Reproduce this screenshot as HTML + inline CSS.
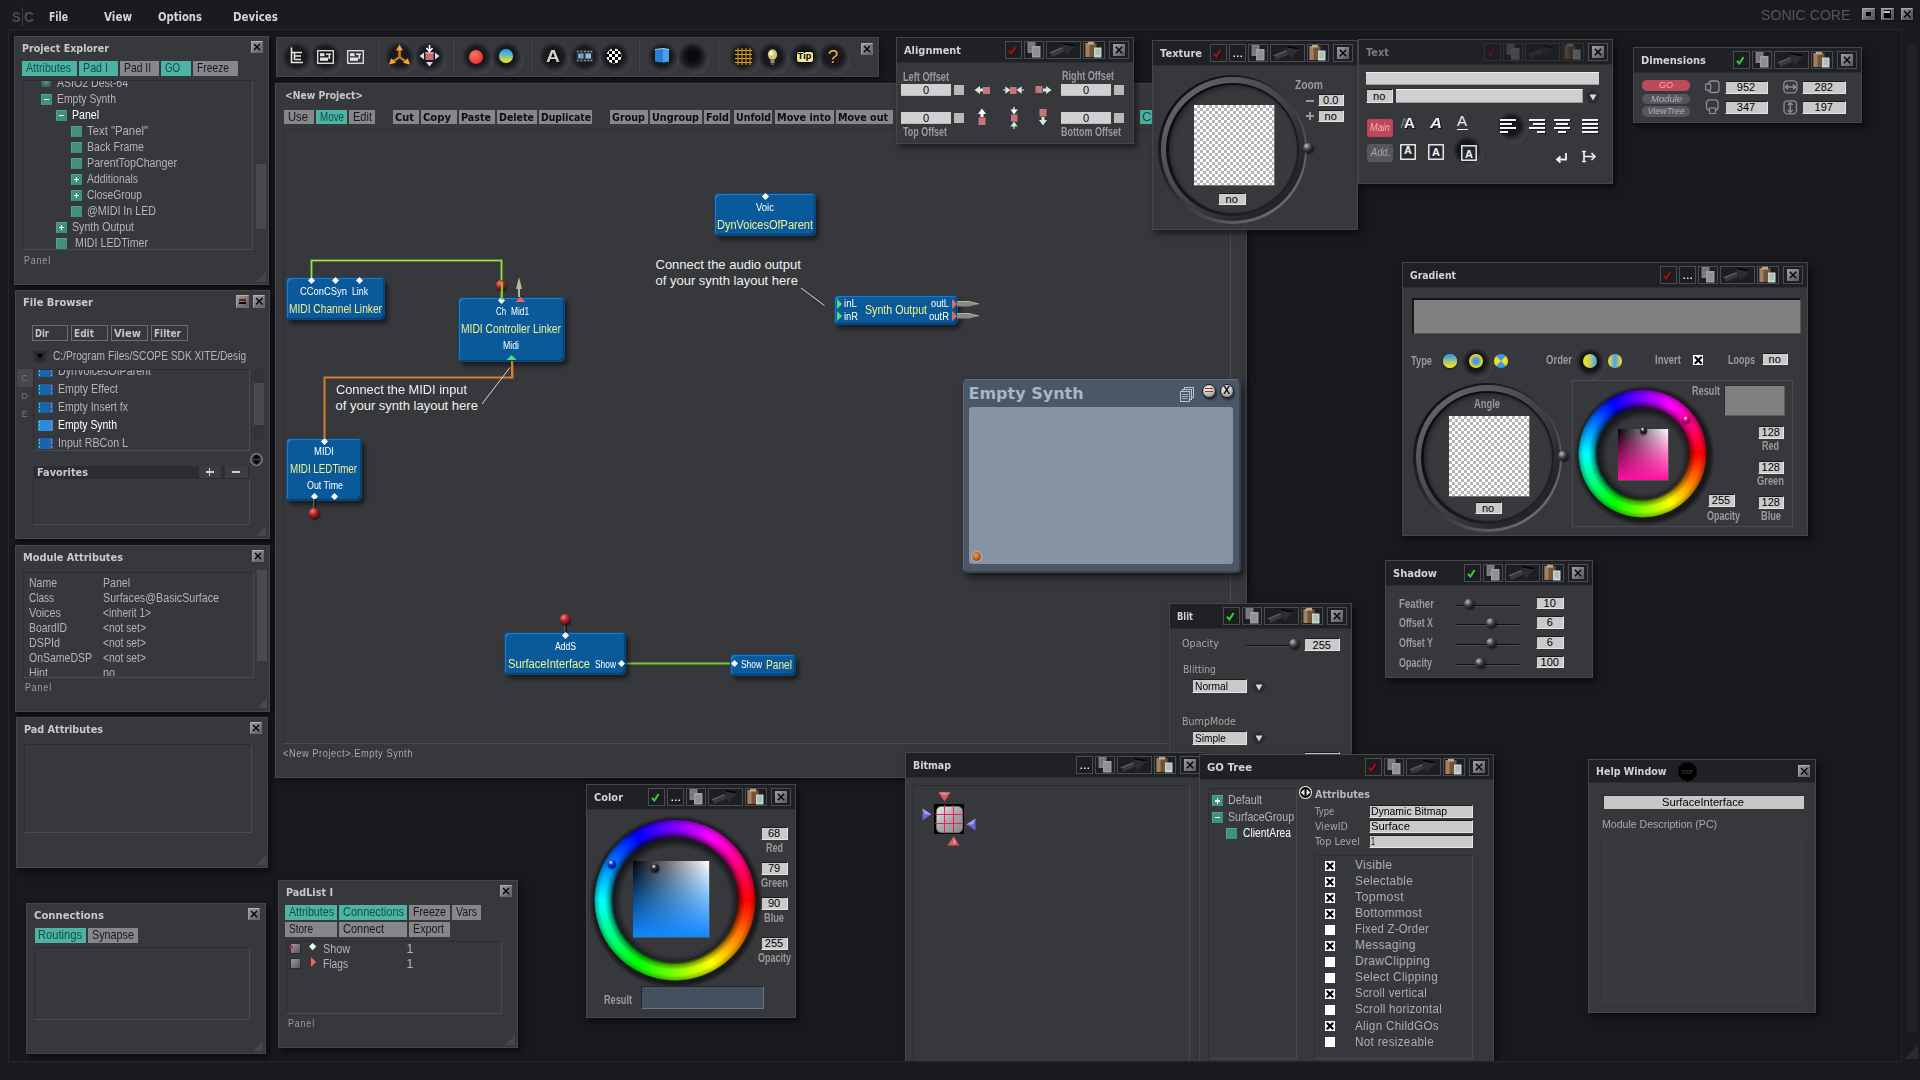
<!DOCTYPE html>
<html><head><meta charset="utf-8"><title>SCOPE SDK</title><style>
html,body{margin:0;padding:0}
body{width:1920px;height:1080px;overflow:hidden;background:#1a1b20;position:relative;font-family:"Liberation Sans",sans-serif}
div,span.t{position:absolute;box-sizing:border-box}
span.t{white-space:pre;transform-origin:0 50%}
.pn{background:#36383c;border:1px solid #44464a;box-shadow:3px 4px 6px rgba(0,0,0,.5)}
.hd{background:#202125;border-bottom:1px solid #2b2d31}
.in{border:1px solid #494b4f;border-top-color:#2b2d31;border-left-color:#2b2d31;background:#36383c}
.vb{background:#cacaca;border-top:1px solid #1c1c1c;border-left:1px solid #3a3a3a;border-right:1px solid #e4e4e4;border-bottom:1px solid #e4e4e4}
.hb{border:1px solid #4a4c50;background:#1d1e22}
.tab{background:#85878b}
.tab.on{background:#4fb3a4}
</style></head><body>
<div style="left:8px;top:29px;width:1894px;height:1033px;background:#17191d;border:1px solid #25272b;"></div>
<div style="left:1907px;top:44px;width:10px;height:987px;background:#202226;"></div>
<svg style="position:absolute;left:1905px;top:1045px;" width="13" height="14" viewBox="0 0 13 14"><path d="M13 0L13 14L0 14Z" fill="#2a2c30"/></svg>
<span class="t" style="left:12.2px;top:6.5px;font:bold 15px/19px 'Liberation Sans',sans-serif;color:#4c4e52;transform:scaleX(0.860);">S</span>
<div style="left:22.3px;top:7px;width:1px;height:19px;background:#3a3c40;"></div>
<span class="t" style="left:23.8px;top:6.5px;font:bold 15px/19px 'Liberation Sans',sans-serif;color:#4c4e52;transform:scaleX(0.924);">C</span>
<span class="t" style="left:49.0px;top:8.5px;font:bold 12px/16px 'DejaVu Sans','Liberation Sans',sans-serif;color:#d6d6d6;transform:scaleX(0.774);">File</span>
<span class="t" style="left:103.5px;top:8.5px;font:bold 12px/16px 'DejaVu Sans','Liberation Sans',sans-serif;color:#d6d6d6;transform:scaleX(0.864);">View</span>
<span class="t" style="left:157.5px;top:8.5px;font:bold 12px/16px 'DejaVu Sans','Liberation Sans',sans-serif;color:#d6d6d6;transform:scaleX(0.837);">Options</span>
<span class="t" style="left:232.5px;top:8.5px;font:bold 12px/16px 'DejaVu Sans','Liberation Sans',sans-serif;color:#d6d6d6;transform:scaleX(0.858);">Devices</span>
<span class="t" style="left:1761.0px;top:4.7px;font:15px/19px 'Liberation Sans',sans-serif;color:#53555a;transform:scaleX(0.942);">SONIC CORE</span>
<div style="left:1862px;top:7.5px;width:12.5px;height:12.5px;background:linear-gradient(135deg,#909295,#4c4e52);border:1px solid #5c5e62;border-top-color:#a8aaad;border-left-color:#98999c;box-shadow:1px 1px 2px rgba(0,0,0,.5);"></div>
<div style="left:1866px;top:11.5px;width:4.5px;height:4.5px;background:#000;"></div>
<div style="left:1881px;top:7.5px;width:12.5px;height:12.5px;background:linear-gradient(135deg,#909295,#4c4e52);border:1px solid #5c5e62;border-top-color:#a8aaad;border-left-color:#98999c;box-shadow:1px 1px 2px rgba(0,0,0,.5);"></div>
<div style="left:1883.5px;top:10px;width:7.5px;height:7.5px;background:#000;"></div>
<div style="left:1884.3px;top:10.6px;width:6px;height:2.4px;background:#c4c4c4;"></div>
<div style="left:1900.5px;top:7.5px;width:12.5px;height:12.5px;background:linear-gradient(135deg,#909295,#4c4e52);border:1px solid #5c5e62;border-top-color:#a8aaad;border-left-color:#98999c;box-shadow:1px 1px 2px rgba(0,0,0,.5);"></div>
<svg style="position:absolute;left:1900.5px;top:7.5px;" width="12.5" height="12.5" viewBox="0 0 12.5 12.5"><path d="M3 3L9.5 9.5M9.5 3L3 9.5" stroke="#000" stroke-width="1.3"/></svg>
<div class="pn" style="left:14px;top:36px;width:255px;height:249px;"></div>
<span class="t" style="left:21.5px;top:40.5px;font:bold 11px/15px 'DejaVu Sans','Liberation Sans',sans-serif;color:#c9c9c9;transform:scaleX(0.870);">Project Explorer</span>
<div style="left:250.5px;top:41px;width:12px;height:12px;background:linear-gradient(135deg,#9a9c9f,#5c5e62);border:1px solid #6a6c70;border-top-color:#b0b2b5;border-left-color:#a0a2a5;"></div>
<svg style="position:absolute;left:250.5px;top:41px;" width="12" height="12" viewBox="0 0 12 12"><path d="M3 3L9 9M9 3L3 9" stroke="#000" stroke-width="1.4" fill="none"/></svg>
<div class="tab on" style="left:22px;top:61px;width:55px;height:15px;"></div>
<span class="t" style="left:25.7px;top:59.4px;font:13px/17px 'Liberation Sans',sans-serif;color:#0b5247;transform:scaleX(0.819);">Attributes</span>
<div class="tab on" style="left:79px;top:61px;width:39px;height:15px;"></div>
<span class="t" style="left:82.7px;top:59.4px;font:13px/17px 'Liberation Sans',sans-serif;color:#0b5247;transform:scaleX(0.823);">Pad I</span>
<div class="tab" style="left:120px;top:61px;width:39px;height:15px;"></div>
<span class="t" style="left:123.7px;top:59.4px;font:13px/17px 'Liberation Sans',sans-serif;color:#17181a;transform:scaleX(0.795);">Pad II</span>
<div class="tab on" style="left:161px;top:61px;width:30px;height:15px;"></div>
<span class="t" style="left:164.7px;top:59.4px;font:13px/17px 'Liberation Sans',sans-serif;color:#0b5247;transform:scaleX(0.742);">GO</span>
<div class="tab" style="left:193px;top:61px;width:45px;height:15px;"></div>
<span class="t" style="left:196.7px;top:59.4px;font:13px/17px 'Liberation Sans',sans-serif;color:#17181a;transform:scaleX(0.791);">Freeze</span>
<div class="in" style="left:22px;top:80px;width:231px;height:170px;overflow:hidden;"></div>
<div style="left:256px;top:164px;width:9.5px;height:65px;background:#484a4e;"></div>
<div style="left:22px;top:81px;width:230px;height:168px;overflow:hidden">
<div style="left:19px;top:-4px;width:10px;height:10px;background:radial-gradient(circle,#5a9a8a,#2c4a44);"></div>
<span class="t" style="left:35.0px;top:-6.1px;font:12px/16px 'Liberation Sans',sans-serif;color:#b4b4b4;transform:scaleX(0.880);">ASIO2 Dest-64</span>
<div style="left:19px;top:12.5px;width:11px;height:11px;background:#3f917f;border-top:1px solid #4fa592;border-left:1px solid #4fa592;"></div>
<div style="left:22px;top:17.5px;width:5px;height:1.5px;background:#fff;"></div>
<span class="t" style="left:35.0px;top:9.9px;font:12px/16px 'Liberation Sans',sans-serif;color:#b4b4b4;transform:scaleX(0.868);">Empty Synth</span>
<div style="left:34px;top:28.5px;width:11px;height:11px;background:#3f917f;border-top:1px solid #4fa592;border-left:1px solid #4fa592;"></div>
<div style="left:37px;top:33.5px;width:5px;height:1.5px;background:#fff;"></div>
<span class="t" style="left:50.0px;top:25.9px;font:12px/16px 'Liberation Sans',sans-serif;color:#ffffff;transform:scaleX(0.880);">Panel</span>
<div style="left:49px;top:44.5px;width:11px;height:11px;background:#3f917f;border-top:1px solid #4fa592;border-left:1px solid #4fa592;"></div>
<span class="t" style="left:65.0px;top:41.9px;font:12px/16px 'Liberation Sans',sans-serif;color:#b4b4b4;transform:scaleX(0.945);">Text "Panel"</span>
<div style="left:49px;top:60.5px;width:11px;height:11px;background:#3f917f;border-top:1px solid #4fa592;border-left:1px solid #4fa592;"></div>
<span class="t" style="left:65.0px;top:57.9px;font:12px/16px 'Liberation Sans',sans-serif;color:#b4b4b4;transform:scaleX(0.881);">Back Frame</span>
<div style="left:49px;top:76.5px;width:11px;height:11px;background:#3f917f;border-top:1px solid #4fa592;border-left:1px solid #4fa592;"></div>
<span class="t" style="left:65.0px;top:73.9px;font:12px/16px 'Liberation Sans',sans-serif;color:#b4b4b4;transform:scaleX(0.894);">ParentTopChanger</span>
<div style="left:49px;top:92.5px;width:11px;height:11px;background:#3f917f;border-top:1px solid #4fa592;border-left:1px solid #4fa592;"></div>
<div style="left:52px;top:97.5px;width:5px;height:1.5px;background:#fff;"></div>
<div style="left:53.8px;top:95.5px;width:1.5px;height:5.5px;background:#fff;"></div>
<span class="t" style="left:65.0px;top:89.9px;font:12px/16px 'Liberation Sans',sans-serif;color:#b4b4b4;transform:scaleX(0.869);">Additionals</span>
<div style="left:49px;top:108.5px;width:11px;height:11px;background:#3f917f;border-top:1px solid #4fa592;border-left:1px solid #4fa592;"></div>
<div style="left:52px;top:113.5px;width:5px;height:1.5px;background:#fff;"></div>
<div style="left:53.8px;top:111.5px;width:1.5px;height:5.5px;background:#fff;"></div>
<span class="t" style="left:65.0px;top:105.9px;font:12px/16px 'Liberation Sans',sans-serif;color:#b4b4b4;transform:scaleX(0.859);">CloseGroup</span>
<div style="left:49px;top:124.5px;width:11px;height:11px;background:#3f917f;border-top:1px solid #4fa592;border-left:1px solid #4fa592;"></div>
<span class="t" style="left:65.0px;top:121.9px;font:12px/16px 'Liberation Sans',sans-serif;color:#b4b4b4;transform:scaleX(0.890);">@MIDI In LED</span>
<div style="left:34px;top:140.5px;width:11px;height:11px;background:#3f917f;border-top:1px solid #4fa592;border-left:1px solid #4fa592;"></div>
<div style="left:37px;top:145.5px;width:5px;height:1.5px;background:#fff;"></div>
<div style="left:38.8px;top:143.5px;width:1.5px;height:5.5px;background:#fff;"></div>
<span class="t" style="left:50.0px;top:137.9px;font:12px/16px 'Liberation Sans',sans-serif;color:#b4b4b4;transform:scaleX(0.886);">Synth Output</span>
<div style="left:34px;top:156.5px;width:11px;height:11px;background:#3f917f;border-top:1px solid #4fa592;border-left:1px solid #4fa592;"></div>
<span class="t" style="left:53.0px;top:153.9px;font:12px/16px 'Liberation Sans',sans-serif;color:#b4b4b4;transform:scaleX(0.888);">MIDI LEDTimer</span>
</div>
<span class="t" style="left:23.5px;top:254.0px;font:10px/14px 'Liberation Sans',sans-serif;color:#9c9c9c;letter-spacing:1px;transform:scaleX(0.883);">Panel</span>
<svg style="position:absolute;left:256px;top:272px;" width="10" height="10" viewBox="0 0 10 10"><path d="M10 0L10 10L0 10Z" fill="#45474b"/></svg>
<div class="pn" style="left:15px;top:290px;width:255px;height:249px;"></div>
<span class="t" style="left:22.5px;top:294.5px;font:bold 11px/15px 'DejaVu Sans','Liberation Sans',sans-serif;color:#c9c9c9;transform:scaleX(0.906);">File Browser</span>
<div style="left:236px;top:295px;width:12.5px;height:12.5px;background:linear-gradient(135deg,#9a9c9f,#5c5e62);border:1px solid #6a6c70;border-top-color:#b0b2b5;border-left-color:#a0a2a5;"></div>
<div style="left:239px;top:299px;width:6.5px;height:1.5px;background:#8a1010;"></div>
<div style="left:239px;top:302px;width:6.5px;height:1.5px;background:#000;"></div>
<div style="left:252.5px;top:295px;width:12.5px;height:12.5px;background:linear-gradient(135deg,#9a9c9f,#5c5e62);border:1px solid #6a6c70;border-top-color:#b0b2b5;border-left-color:#a0a2a5;"></div>
<svg style="position:absolute;left:252.5px;top:295px;" width="12.5" height="12.5" viewBox="0 0 12.5 12.5"><path d="M3 3L9.5 9.5M9.5 3L3 9.5" stroke="#000" stroke-width="1.4" fill="none"/></svg>
<div style="left:31.5px;top:324.5px;width:36.5px;height:16.5px;border:1px solid #6c6e72;"></div>
<span class="t" style="left:34.5px;top:325.5px;font:bold 11px/15px 'DejaVu Sans','Liberation Sans',sans-serif;color:#c4c4c4;transform:scaleX(0.765);">Dir</span>
<div style="left:71px;top:324.5px;width:36.5px;height:16.5px;border:1px solid #6c6e72;"></div>
<span class="t" style="left:74.0px;top:325.5px;font:bold 11px/15px 'DejaVu Sans','Liberation Sans',sans-serif;color:#c4c4c4;transform:scaleX(0.819);">Edit</span>
<div style="left:111px;top:324.5px;width:36.5px;height:16.5px;border:1px solid #6c6e72;"></div>
<span class="t" style="left:114.0px;top:325.5px;font:bold 11px/15px 'DejaVu Sans','Liberation Sans',sans-serif;color:#c4c4c4;transform:scaleX(0.909);">View</span>
<div style="left:151px;top:324.5px;width:36.5px;height:16.5px;border:1px solid #6c6e72;"></div>
<span class="t" style="left:154.0px;top:325.5px;font:bold 11px/15px 'DejaVu Sans','Liberation Sans',sans-serif;color:#c4c4c4;transform:scaleX(0.814);">Filter</span>
<div style="left:34px;top:351px;width:12px;height:10.5px;background:#2a2c30;"></div>
<svg style="position:absolute;left:34px;top:351px;" width="12" height="11" viewBox="0 0 12 11"><path d="M2.5 3L9.5 3L6 8Z" fill="#000"/></svg>
<span class="t" style="left:53.0px;top:347.9px;font:12px/16px 'Liberation Sans',sans-serif;color:#b4b4b4;transform:scaleX(0.849);">C:/Program Files/SCOPE SDK XITE/Desig</span>
<div style="left:17px;top:369px;width:16px;height:17.5px;background:#45474b;"></div>
<span class="t" style="left:21.2px;top:371.5px;font:9px/13px 'Liberation Sans',sans-serif;color:#74767a;">C</span>
<span class="t" style="left:21.2px;top:389.5px;font:9px/13px 'Liberation Sans',sans-serif;color:#74767a;">D</span>
<span class="t" style="left:21.5px;top:408.0px;font:9px/13px 'Liberation Sans',sans-serif;color:#74767a;">E</span>
<div class="in" style="left:33px;top:369px;width:216.5px;height:81.5px;"></div>
<div style="left:34px;top:370px;width:214px;height:79px;overflow:hidden">
<div style="left:4px;top:-4.5px;width:15px;height:11px;background:#1665ae;border-radius:1px;"></div>
<div style="left:4.5px;top:-3.5px;width:1.8px;height:2.2px;background:#40d888;"></div>
<div style="left:4.5px;top:0px;width:1.8px;height:2.2px;background:#40d888;"></div>
<div style="left:4.5px;top:3.5px;width:1.8px;height:2.2px;background:#40d888;"></div>
<div style="left:16.7px;top:-3.5px;width:1.8px;height:2.2px;background:#f07050;"></div>
<div style="left:16.7px;top:0px;width:1.8px;height:2.2px;background:#f07050;"></div>
<div style="left:16.7px;top:3.5px;width:1.8px;height:2.2px;background:#f07050;"></div>
<span class="t" style="left:24.0px;top:-7.1px;font:12px/16px 'Liberation Sans',sans-serif;color:#b4b4b4;transform:scaleX(0.888);">DynVoicesOfParent</span>
<div style="left:4px;top:13.5px;width:15px;height:11px;background:#1665ae;border-radius:1px;"></div>
<div style="left:4.5px;top:14.5px;width:1.8px;height:2.2px;background:#40d888;"></div>
<div style="left:4.5px;top:18px;width:1.8px;height:2.2px;background:#40d888;"></div>
<div style="left:4.5px;top:21.5px;width:1.8px;height:2.2px;background:#40d888;"></div>
<div style="left:16.7px;top:14.5px;width:1.8px;height:2.2px;background:#f07050;"></div>
<div style="left:16.7px;top:18px;width:1.8px;height:2.2px;background:#f07050;"></div>
<div style="left:16.7px;top:21.5px;width:1.8px;height:2.2px;background:#f07050;"></div>
<span class="t" style="left:24.0px;top:10.9px;font:12px/16px 'Liberation Sans',sans-serif;color:#b4b4b4;transform:scaleX(0.885);">Empty Effect</span>
<div style="left:4px;top:31.5px;width:15px;height:11px;background:#1665ae;border-radius:1px;"></div>
<div style="left:4.5px;top:32.5px;width:1.8px;height:2.2px;background:#40d888;"></div>
<div style="left:4.5px;top:36px;width:1.8px;height:2.2px;background:#40d888;"></div>
<div style="left:4.5px;top:39.5px;width:1.8px;height:2.2px;background:#40d888;"></div>
<div style="left:16.7px;top:32.5px;width:1.8px;height:2.2px;background:#f07050;"></div>
<div style="left:16.7px;top:36px;width:1.8px;height:2.2px;background:#f07050;"></div>
<div style="left:16.7px;top:39.5px;width:1.8px;height:2.2px;background:#f07050;"></div>
<span class="t" style="left:24.0px;top:28.9px;font:12px/16px 'Liberation Sans',sans-serif;color:#b4b4b4;transform:scaleX(0.875);">Empty Insert fx</span>
<div style="left:4px;top:49.5px;width:15px;height:11px;background:#2a8ae0;border-radius:1px;"></div>
<div style="left:4.5px;top:50.5px;width:1.8px;height:2.2px;background:#40d888;"></div>
<div style="left:4.5px;top:54px;width:1.8px;height:2.2px;background:#40d888;"></div>
<div style="left:4.5px;top:57.5px;width:1.8px;height:2.2px;background:#40d888;"></div>
<div style="left:16.7px;top:50.5px;width:1.8px;height:2.2px;background:#f07050;"></div>
<div style="left:16.7px;top:54px;width:1.8px;height:2.2px;background:#f07050;"></div>
<div style="left:16.7px;top:57.5px;width:1.8px;height:2.2px;background:#f07050;"></div>
<span class="t" style="left:24.0px;top:46.9px;font:12px/16px 'Liberation Sans',sans-serif;color:#ffffff;transform:scaleX(0.868);">Empty Synth</span>
<div style="left:4px;top:67.5px;width:15px;height:11px;background:#1665ae;border-radius:1px;"></div>
<div style="left:4.5px;top:68.5px;width:1.8px;height:2.2px;background:#40d888;"></div>
<div style="left:4.5px;top:72px;width:1.8px;height:2.2px;background:#40d888;"></div>
<div style="left:4.5px;top:75.5px;width:1.8px;height:2.2px;background:#40d888;"></div>
<div style="left:16.7px;top:68.5px;width:1.8px;height:2.2px;background:#f07050;"></div>
<div style="left:16.7px;top:72px;width:1.8px;height:2.2px;background:#f07050;"></div>
<div style="left:16.7px;top:75.5px;width:1.8px;height:2.2px;background:#f07050;"></div>
<span class="t" style="left:24.0px;top:64.9px;font:12px/16px 'Liberation Sans',sans-serif;color:#b4b4b4;transform:scaleX(0.890);">Input RBCon L</span>
</div>
<div style="left:254px;top:369px;width:10px;height:71px;background:#313337;"></div>
<div style="left:254px;top:382.5px;width:10px;height:42.5px;background:#484a4e;"></div>
<svg style="position:absolute;left:249.5px;top:452.5px;" width="13" height="13" viewBox="0 0 13 13"><circle cx="6.5" cy="6.5" r="5.8" fill="#36383c" stroke="#85878b" stroke-width="1.2"/><path d="M3 5.6L6.5 1.2L10 5.6ZM3 7.4L6.5 11.8L10 7.4Z" fill="#000"/></svg>
<div style="left:33px;top:465.5px;width:216px;height:12.5px;background:#2b2d31;"></div>
<span class="t" style="left:36.5px;top:464.5px;font:bold 11px/15px 'DejaVu Sans','Liberation Sans',sans-serif;color:#c9c9c9;transform:scaleX(0.887);">Favorites</span>
<div style="left:199px;top:466px;width:22px;height:12px;background:#3b3d41;"></div>
<div style="left:225px;top:466px;width:22.5px;height:12px;background:#3b3d41;"></div>
<div style="left:205.5px;top:471.3px;width:8px;height:1.6px;background:#d0d0d0;"></div>
<div style="left:208.7px;top:468px;width:1.6px;height:8px;background:#d0d0d0;"></div>
<div style="left:232px;top:471.3px;width:8px;height:1.6px;background:#d0d0d0;"></div>
<div class="in" style="left:33px;top:478px;width:216.5px;height:46.5px;"></div>
<svg style="position:absolute;left:256px;top:526px;" width="10" height="10" viewBox="0 0 10 10"><path d="M10 0L10 10L0 10Z" fill="#45474b"/></svg>
<div class="pn" style="left:15px;top:545px;width:255px;height:167px;"></div>
<span class="t" style="left:22.5px;top:549.5px;font:bold 11px/15px 'DejaVu Sans','Liberation Sans',sans-serif;color:#c9c9c9;transform:scaleX(0.889);">Module Attributes</span>
<div style="left:251.5px;top:550px;width:12px;height:12px;background:linear-gradient(135deg,#9a9c9f,#5c5e62);border:1px solid #6a6c70;border-top-color:#b0b2b5;border-left-color:#a0a2a5;"></div>
<svg style="position:absolute;left:251.5px;top:550px;" width="12" height="12" viewBox="0 0 12 12"><path d="M3 3L9 9M9 3L3 9" stroke="#000" stroke-width="1.4" fill="none"/></svg>
<div class="in" style="left:23px;top:572px;width:230.5px;height:105.5px;"></div>
<div style="left:24px;top:573px;width:228px;height:103px;overflow:hidden">
<span class="t" style="left:5.0px;top:1.9px;font:12px/16px 'Liberation Sans',sans-serif;color:#b4b4b4;transform:scaleX(0.875);">Name</span>
<span class="t" style="left:79.0px;top:1.9px;font:12px/16px 'Liberation Sans',sans-serif;color:#b4b4b4;transform:scaleX(0.880);">Panel</span>
<span class="t" style="left:5.0px;top:16.9px;font:12px/16px 'Liberation Sans',sans-serif;color:#b4b4b4;transform:scaleX(0.833);">Class</span>
<span class="t" style="left:79.0px;top:16.9px;font:12px/16px 'Liberation Sans',sans-serif;color:#b4b4b4;transform:scaleX(0.891);">Surfaces@BasicSurface</span>
<span class="t" style="left:5.0px;top:31.9px;font:12px/16px 'Liberation Sans',sans-serif;color:#b4b4b4;transform:scaleX(0.905);">Voices</span>
<span class="t" style="left:79.0px;top:31.9px;font:12px/16px 'Liberation Sans',sans-serif;color:#b4b4b4;transform:scaleX(0.846);">&lt;inherit 1&gt;</span>
<span class="t" style="left:5.0px;top:46.9px;font:12px/16px 'Liberation Sans',sans-serif;color:#b4b4b4;transform:scaleX(0.863);">BoardID</span>
<span class="t" style="left:79.0px;top:46.9px;font:12px/16px 'Liberation Sans',sans-serif;color:#b4b4b4;transform:scaleX(0.859);">&lt;not set&gt;</span>
<span class="t" style="left:5.0px;top:61.9px;font:12px/16px 'Liberation Sans',sans-serif;color:#b4b4b4;transform:scaleX(0.894);">DSPId</span>
<span class="t" style="left:79.0px;top:61.9px;font:12px/16px 'Liberation Sans',sans-serif;color:#b4b4b4;transform:scaleX(0.859);">&lt;not set&gt;</span>
<span class="t" style="left:5.0px;top:76.9px;font:12px/16px 'Liberation Sans',sans-serif;color:#b4b4b4;transform:scaleX(0.875);">OnSameDSP</span>
<span class="t" style="left:79.0px;top:76.9px;font:12px/16px 'Liberation Sans',sans-serif;color:#b4b4b4;transform:scaleX(0.859);">&lt;not set&gt;</span>
<span class="t" style="left:5.0px;top:91.9px;font:12px/16px 'Liberation Sans',sans-serif;color:#b4b4b4;transform:scaleX(0.890);">Hint</span>
<span class="t" style="left:79.0px;top:91.9px;font:12px/16px 'Liberation Sans',sans-serif;color:#b4b4b4;transform:scaleX(0.899);">no</span>
</div>
<div style="left:257px;top:570px;width:9.5px;height:91px;background:#484a4e;"></div>
<span class="t" style="left:24.5px;top:680.5px;font:10px/14px 'Liberation Sans',sans-serif;color:#9c9c9c;letter-spacing:1px;transform:scaleX(0.883);">Panel</span>
<svg style="position:absolute;left:257px;top:698px;" width="10" height="10" viewBox="0 0 10 10"><path d="M10 0L10 10L0 10Z" fill="#45474b"/></svg>
<div class="pn" style="left:16px;top:717px;width:252px;height:151px;"></div>
<span class="t" style="left:23.5px;top:721.5px;font:bold 11px/15px 'DejaVu Sans','Liberation Sans',sans-serif;color:#c9c9c9;transform:scaleX(0.877);">Pad Attributes</span>
<div style="left:249.5px;top:722px;width:12px;height:12px;background:linear-gradient(135deg,#9a9c9f,#5c5e62);border:1px solid #6a6c70;border-top-color:#b0b2b5;border-left-color:#a0a2a5;"></div>
<svg style="position:absolute;left:249.5px;top:722px;" width="12" height="12" viewBox="0 0 12 12"><path d="M3 3L9 9M9 3L3 9" stroke="#000" stroke-width="1.4" fill="none"/></svg>
<div class="in" style="left:24px;top:744px;width:227.5px;height:89px;"></div>
<svg style="position:absolute;left:256px;top:855px;" width="10" height="10" viewBox="0 0 10 10"><path d="M10 0L10 10L0 10Z" fill="#45474b"/></svg>
<div class="pn" style="left:26px;top:903px;width:240px;height:151px;"></div>
<span class="t" style="left:33.5px;top:907.5px;font:bold 11px/15px 'DejaVu Sans','Liberation Sans',sans-serif;color:#c9c9c9;transform:scaleX(0.918);">Connections</span>
<div style="left:247.5px;top:908px;width:12px;height:12px;background:linear-gradient(135deg,#9a9c9f,#5c5e62);border:1px solid #6a6c70;border-top-color:#b0b2b5;border-left-color:#a0a2a5;"></div>
<svg style="position:absolute;left:247.5px;top:908px;" width="12" height="12" viewBox="0 0 12 12"><path d="M3 3L9 9M9 3L3 9" stroke="#000" stroke-width="1.4" fill="none"/></svg>
<div class="tab on" style="left:34.5px;top:928px;width:51.5px;height:15px;"></div>
<span class="t" style="left:38.2px;top:926.4px;font:13px/17px 'Liberation Sans',sans-serif;color:#0b5247;transform:scaleX(0.857);">Routings</span>
<div class="tab" style="left:88px;top:928px;width:49.5px;height:15px;"></div>
<span class="t" style="left:91.7px;top:926.4px;font:13px/17px 'Liberation Sans',sans-serif;color:#17181a;transform:scaleX(0.830);">Synapse</span>
<div class="in" style="left:34px;top:947px;width:215.5px;height:72.5px;"></div>
<svg style="position:absolute;left:253px;top:1041px;" width="10" height="10" viewBox="0 0 10 10"><path d="M10 0L10 10L0 10Z" fill="#45474b"/></svg>
<div style="left:276px;top:37px;width:603px;height:40px;background:#36383c;border:1px solid #44464a;box-shadow:2px 3px 5px rgba(0,0,0,.45);"></div>
<div style="left:377px;top:41px;width:1px;height:32px;background:#303236;"></div>
<div style="left:378px;top:41px;width:1px;height:32px;background:#45474b;"></div>
<div style="left:452px;top:41px;width:1px;height:32px;background:#303236;"></div>
<div style="left:453px;top:41px;width:1px;height:32px;background:#45474b;"></div>
<div style="left:529.5px;top:41px;width:1px;height:32px;background:#303236;"></div>
<div style="left:530.5px;top:41px;width:1px;height:32px;background:#45474b;"></div>
<div style="left:637.5px;top:41px;width:1px;height:32px;background:#303236;"></div>
<div style="left:638.5px;top:41px;width:1px;height:32px;background:#45474b;"></div>
<div style="left:716.5px;top:41px;width:1px;height:32px;background:#303236;"></div>
<div style="left:717.5px;top:41px;width:1px;height:32px;background:#45474b;"></div>
<div style="left:281.5px;top:41.5px;width:29px;height:29px;background:radial-gradient(circle,rgba(14,15,18,0.75) 0%,rgba(14,15,18,0.75) 45%,rgba(20,21,24,0) 72%);border-radius:50%;"></div>
<div style="left:284.5px;top:45.5px;width:29px;height:29px;background:radial-gradient(circle,rgba(80,82,86,0) 55%,rgba(80,82,86,.35) 64%,rgba(80,82,86,0) 74%);border-radius:50%;clip-path:polygon(100% 30%,100% 100%,30% 100%);"></div>
<div style="left:310.5px;top:41.5px;width:29px;height:29px;background:radial-gradient(circle,rgba(14,15,18,0.75) 0%,rgba(14,15,18,0.75) 45%,rgba(20,21,24,0) 72%);border-radius:50%;"></div>
<div style="left:313.5px;top:45.5px;width:29px;height:29px;background:radial-gradient(circle,rgba(80,82,86,0) 55%,rgba(80,82,86,.35) 64%,rgba(80,82,86,0) 74%);border-radius:50%;clip-path:polygon(100% 30%,100% 100%,30% 100%);"></div>
<div style="left:384.5px;top:41.5px;width:29px;height:29px;background:radial-gradient(circle,rgba(14,15,18,0.75) 0%,rgba(14,15,18,0.75) 45%,rgba(20,21,24,0) 72%);border-radius:50%;"></div>
<div style="left:387.5px;top:45.5px;width:29px;height:29px;background:radial-gradient(circle,rgba(80,82,86,0) 55%,rgba(80,82,86,.35) 64%,rgba(80,82,86,0) 74%);border-radius:50%;clip-path:polygon(100% 30%,100% 100%,30% 100%);"></div>
<div style="left:414.5px;top:41.5px;width:29px;height:29px;background:radial-gradient(circle,rgba(14,15,18,0.75) 0%,rgba(14,15,18,0.75) 45%,rgba(20,21,24,0) 72%);border-radius:50%;"></div>
<div style="left:417.5px;top:45.5px;width:29px;height:29px;background:radial-gradient(circle,rgba(80,82,86,0) 55%,rgba(80,82,86,.35) 64%,rgba(80,82,86,0) 74%);border-radius:50%;clip-path:polygon(100% 30%,100% 100%,30% 100%);"></div>
<div style="left:461.5px;top:41.5px;width:29px;height:29px;background:radial-gradient(circle,rgba(14,15,18,0.75) 0%,rgba(14,15,18,0.75) 45%,rgba(20,21,24,0) 72%);border-radius:50%;"></div>
<div style="left:464.5px;top:45.5px;width:29px;height:29px;background:radial-gradient(circle,rgba(80,82,86,0) 55%,rgba(80,82,86,.35) 64%,rgba(80,82,86,0) 74%);border-radius:50%;clip-path:polygon(100% 30%,100% 100%,30% 100%);"></div>
<div style="left:491.5px;top:41.5px;width:29px;height:29px;background:radial-gradient(circle,rgba(14,15,18,0.75) 0%,rgba(14,15,18,0.75) 45%,rgba(20,21,24,0) 72%);border-radius:50%;"></div>
<div style="left:494.5px;top:45.5px;width:29px;height:29px;background:radial-gradient(circle,rgba(80,82,86,0) 55%,rgba(80,82,86,.35) 64%,rgba(80,82,86,0) 74%);border-radius:50%;clip-path:polygon(100% 30%,100% 100%,30% 100%);"></div>
<div style="left:538.5px;top:41.5px;width:29px;height:29px;background:radial-gradient(circle,rgba(14,15,18,0.75) 0%,rgba(14,15,18,0.75) 45%,rgba(20,21,24,0) 72%);border-radius:50%;"></div>
<div style="left:541.5px;top:45.5px;width:29px;height:29px;background:radial-gradient(circle,rgba(80,82,86,0) 55%,rgba(80,82,86,.35) 64%,rgba(80,82,86,0) 74%);border-radius:50%;clip-path:polygon(100% 30%,100% 100%,30% 100%);"></div>
<div style="left:569.5px;top:41.5px;width:29px;height:29px;background:radial-gradient(circle,rgba(14,15,18,0.75) 0%,rgba(14,15,18,0.75) 45%,rgba(20,21,24,0) 72%);border-radius:50%;"></div>
<div style="left:572.5px;top:45.5px;width:29px;height:29px;background:radial-gradient(circle,rgba(80,82,86,0) 55%,rgba(80,82,86,.35) 64%,rgba(80,82,86,0) 74%);border-radius:50%;clip-path:polygon(100% 30%,100% 100%,30% 100%);"></div>
<div style="left:599.5px;top:41.5px;width:29px;height:29px;background:radial-gradient(circle,rgba(14,15,18,0.75) 0%,rgba(14,15,18,0.75) 45%,rgba(20,21,24,0) 72%);border-radius:50%;"></div>
<div style="left:602.5px;top:45.5px;width:29px;height:29px;background:radial-gradient(circle,rgba(80,82,86,0) 55%,rgba(80,82,86,.35) 64%,rgba(80,82,86,0) 74%);border-radius:50%;clip-path:polygon(100% 30%,100% 100%,30% 100%);"></div>
<div style="left:647.5px;top:41.5px;width:29px;height:29px;background:radial-gradient(circle,rgba(14,15,18,0.75) 0%,rgba(14,15,18,0.75) 45%,rgba(20,21,24,0) 72%);border-radius:50%;"></div>
<div style="left:650.5px;top:45.5px;width:29px;height:29px;background:radial-gradient(circle,rgba(80,82,86,0) 55%,rgba(80,82,86,.35) 64%,rgba(80,82,86,0) 74%);border-radius:50%;clip-path:polygon(100% 30%,100% 100%,30% 100%);"></div>
<div style="left:678px;top:41.5px;width:29px;height:29px;background:radial-gradient(circle,rgba(14,15,18,0.75) 0%,rgba(14,15,18,0.75) 45%,rgba(20,21,24,0) 72%);border-radius:50%;"></div>
<div style="left:681px;top:45.5px;width:29px;height:29px;background:radial-gradient(circle,rgba(80,82,86,0) 55%,rgba(80,82,86,.35) 64%,rgba(80,82,86,0) 74%);border-radius:50%;clip-path:polygon(100% 30%,100% 100%,30% 100%);"></div>
<div style="left:728.5px;top:41.5px;width:29px;height:29px;background:radial-gradient(circle,rgba(14,15,18,0.75) 0%,rgba(14,15,18,0.75) 45%,rgba(20,21,24,0) 72%);border-radius:50%;"></div>
<div style="left:731.5px;top:45.5px;width:29px;height:29px;background:radial-gradient(circle,rgba(80,82,86,0) 55%,rgba(80,82,86,.35) 64%,rgba(80,82,86,0) 74%);border-radius:50%;clip-path:polygon(100% 30%,100% 100%,30% 100%);"></div>
<div style="left:758px;top:41.5px;width:29px;height:29px;background:radial-gradient(circle,rgba(14,15,18,0.75) 0%,rgba(14,15,18,0.75) 45%,rgba(20,21,24,0) 72%);border-radius:50%;"></div>
<div style="left:761px;top:45.5px;width:29px;height:29px;background:radial-gradient(circle,rgba(80,82,86,0) 55%,rgba(80,82,86,.35) 64%,rgba(80,82,86,0) 74%);border-radius:50%;clip-path:polygon(100% 30%,100% 100%,30% 100%);"></div>
<div style="left:789.5px;top:41.5px;width:29px;height:29px;background:radial-gradient(circle,rgba(14,15,18,0.75) 0%,rgba(14,15,18,0.75) 45%,rgba(20,21,24,0) 72%);border-radius:50%;"></div>
<div style="left:792.5px;top:45.5px;width:29px;height:29px;background:radial-gradient(circle,rgba(80,82,86,0) 55%,rgba(80,82,86,.35) 64%,rgba(80,82,86,0) 74%);border-radius:50%;clip-path:polygon(100% 30%,100% 100%,30% 100%);"></div>
<div style="left:818.5px;top:41.5px;width:29px;height:29px;background:radial-gradient(circle,rgba(14,15,18,0.75) 0%,rgba(14,15,18,0.75) 45%,rgba(20,21,24,0) 72%);border-radius:50%;"></div>
<div style="left:821.5px;top:45.5px;width:29px;height:29px;background:radial-gradient(circle,rgba(80,82,86,0) 55%,rgba(80,82,86,.35) 64%,rgba(80,82,86,0) 74%);border-radius:50%;clip-path:polygon(100% 30%,100% 100%,30% 100%);"></div>
<svg style="position:absolute;left:288px;top:46px;" width="18" height="20" viewBox="0 0 18 20"><path d="M3.5 1.5V16.5H15M3.5 6.5H14M6.5 6.5V13.5M6.5 10H13M6.5 13.5H13" stroke="#e4e4e4" stroke-width="1.6" fill="none"/></svg>
<svg style="position:absolute;left:316.5px;top:50px;" width="17" height="14" viewBox="0 0 17 14"><rect x="0.7" y="0.7" width="15.6" height="12.6" fill="none" stroke="#e4e4e4" stroke-width="1.3"/><rect x="3" y="3.2" width="4.5" height="3" fill="#e4e4e4"/><rect x="3" y="7.5" width="8" height="3.3" fill="#e4e4e4"/><path d="M9 4.2H14M12.3 4.2V9" stroke="#e4e4e4" stroke-width="1.6" fill="none"/></svg>
<svg style="position:absolute;left:346.5px;top:50px;" width="17" height="14" viewBox="0 0 17 14"><rect x="0.7" y="0.7" width="15.6" height="12.6" fill="none" stroke="#e4e4e4" stroke-width="1.3"/><rect x="3" y="3.2" width="4.5" height="3" fill="#e4e4e4"/><rect x="3" y="7.5" width="8" height="3.3" fill="#e4e4e4"/><path d="M9 4.2H14M12.3 4.2V9" stroke="#e4e4e4" stroke-width="1.6" fill="none"/></svg>
<svg style="position:absolute;left:388px;top:44px;" width="23" height="23" viewBox="0 0 23 23"><g stroke="#c07818" stroke-width="2.6" stroke-linecap="round"><path d="M11.5 13V5M11.5 13L4.5 18M11.5 13L18.5 18"/></g><path d="M11.5 0.5L15 6.5H8Z" fill="#f0a838"/><path d="M1 20.5L3.2 14.2L8 18.8Z" fill="#f0a838"/><path d="M22 20.5L19.8 14.2L15 18.8Z" fill="#f0a838"/></svg>
<svg style="position:absolute;left:419px;top:45px;" width="21" height="22" viewBox="0 0 21 22"><rect x="6.5" y="7" width="8" height="8" fill="#c86a72"/><rect x="6.5" y="7" width="8" height="2" fill="#e09098"/><path d="M10.5 0V5M7.5 3L10.5 6.5L13.5 3" stroke="#fff" stroke-width="1.6" fill="none"/><path d="M0.5 11L5 7.5V14.5Z" fill="#cfe0dc"/><path d="M20.5 11L16 7.5V14.5Z" fill="#cfe0dc"/><path d="M10.5 21.5L7 17H14Z" fill="#cfe0dc"/></svg>
<div style="left:469px;top:50px;width:14px;height:14px;background:radial-gradient(circle at 40% 35%,#ff7a6a,#ee3a36 60%,#c82a2a);border-radius:50%;"></div>
<div style="left:499px;top:49px;width:14px;height:14px;background:linear-gradient(180deg,#2a98ee 0%,#58b8d0 40%,#c8d848 75%,#f0e020 100%);border-radius:50%;"></div>
<span class="t" style="left:546.0px;top:47.0px;font:bold 16px/20px 'Liberation Sans',sans-serif;color:#cfcfcf;transform:scaleX(1.211);text-shadow:1px 1px 1px #000;">A</span>
<svg style="position:absolute;left:576px;top:50px;" width="17" height="12" viewBox="0 0 17 12"><rect x="0" y="0" width="17" height="12" fill="#2c2e32"/><rect x="2" y="3.5" width="5.5" height="5" fill="#68a8d8"/><rect x="9.5" y="3.5" width="5.5" height="5" fill="#88c0e8"/><g fill="#9a9a9a"><rect x="1" y="0.8" width="1.6" height="1.4"/><rect x="4.5" y="0.8" width="1.6" height="1.4"/><rect x="8" y="0.8" width="1.6" height="1.4"/><rect x="11.5" y="0.8" width="1.6" height="1.4"/><rect x="14.6" y="0.8" width="1.6" height="1.4"/><rect x="1" y="9.8" width="1.6" height="1.4"/><rect x="4.5" y="9.8" width="1.6" height="1.4"/><rect x="8" y="9.8" width="1.6" height="1.4"/><rect x="11.5" y="9.8" width="1.6" height="1.4"/><rect x="14.6" y="9.8" width="1.6" height="1.4"/></g></svg>
<svg style="position:absolute;left:606px;top:48px;" width="16" height="16" viewBox="0 0 16 16"><defs><pattern id="ck" width="6" height="6" patternUnits="userSpaceOnUse"><rect width="6" height="6" fill="#fff"/><rect width="3" height="3" fill="#000"/><rect x="3" y="3" width="3" height="3" fill="#000"/></pattern></defs><circle cx="8" cy="8" r="7.5" fill="url(#ck)"/></svg>
<svg style="position:absolute;left:654px;top:47px;" width="16" height="17" viewBox="0 0 16 17"><path d="M1 2.5L9 1.5V15.5L1 14.5Z" fill="#2a80d8"/><path d="M9 1.5L15 2.5V14.5L9 15.5Z" fill="#4aa0f0"/><path d="M1 2.5L9 1.5L15 2.5" stroke="#9ad0ff" stroke-width="1" fill="none"/></svg>
<div style="left:682.5px;top:46px;width:20px;height:20px;background:radial-gradient(circle,#08090b 30%,rgba(8,9,11,0) 70%);border-radius:50%;"></div>
<svg style="position:absolute;left:735px;top:48px;" width="17" height="17" viewBox="0 0 17 17"><g stroke="#dca020" stroke-width="1"><path d="M3 0V17M7 0V17M11 0V17M15 0V17M0 2.5H17M0 6.5H17M0 10.5H17M0 14.5H17"/></g></svg>
<svg style="position:absolute;left:767px;top:49px;" width="11" height="17" viewBox="0 0 11 17"><ellipse cx="5.5" cy="5.5" rx="4.6" ry="5.2" fill="#d4c878"/><ellipse cx="4.3" cy="4.2" rx="2" ry="2.5" fill="#f4f0c0"/><rect x="3.5" y="10.2" width="4" height="4" fill="#8a8a80"/><rect x="4" y="14.2" width="3" height="1.8" fill="#55554e"/></svg>
<div style="left:795.5px;top:50.5px;width:18px;height:12px;background:#f0e890;border-radius:3px;border:1px solid #000;"></div>
<span class="t" style="left:797.8px;top:50.3px;font:bold 9px/13px 'Liberation Sans',sans-serif;color:#000;">Tip</span>
<span class="t" style="left:827.7px;top:45.4px;font:19px/23px 'Liberation Sans',sans-serif;color:#f0b040;text-shadow:1px 1px 1px #000;">?</span>
<div style="left:861px;top:43px;width:12px;height:12px;background:linear-gradient(135deg,#9a9c9f,#5c5e62);border:1px solid #6a6c70;border-top-color:#b0b2b5;border-left-color:#a0a2a5;"></div>
<svg style="position:absolute;left:861px;top:43px;" width="12" height="12" viewBox="0 0 12 12"><path d="M3 3L9 9M9 3L3 9" stroke="#000" stroke-width="1.4" fill="none"/></svg>
<div style="left:275px;top:83px;width:972px;height:695px;background:#36383c;border:1px solid #44464a;box-shadow:2px 3px 5px rgba(0,0,0,.45);"></div>
<span class="t" style="left:284.5px;top:87.5px;font:bold 11px/15px 'DejaVu Sans','Liberation Sans',sans-serif;color:#c9c9c9;transform:scaleX(0.838);">&lt;New Project&gt;</span>
<div class="tab" style="left:284px;top:110px;width:29.5px;height:14px;"></div>
<span class="t" style="left:287.5px;top:107.9px;font:13px/17px 'Liberation Sans',sans-serif;color:#17181a;transform:scaleX(0.865);">Use</span>
<div class="tab on" style="left:316px;top:110px;width:31px;height:14px;"></div>
<span class="t" style="left:319.5px;top:107.9px;font:13px/17px 'Liberation Sans',sans-serif;color:#0b5247;transform:scaleX(0.755);">Move</span>
<div class="tab" style="left:349px;top:110px;width:26px;height:14px;"></div>
<span class="t" style="left:352.5px;top:107.9px;font:13px/17px 'Liberation Sans',sans-serif;color:#17181a;transform:scaleX(0.848);">Edit</span>
<div class="tab" style="left:393px;top:110px;width:26px;height:14px;"></div>
<span class="t" style="left:394.5px;top:109.7px;font:bold 11px/15px 'DejaVu Sans','Liberation Sans',sans-serif;color:#0c0c0c;transform:scaleX(0.897);">Cut</span>
<div class="tab" style="left:421px;top:110px;width:35.5px;height:14px;"></div>
<span class="t" style="left:422.5px;top:109.7px;font:bold 11px/15px 'DejaVu Sans','Liberation Sans',sans-serif;color:#0c0c0c;transform:scaleX(0.912);">Copy</span>
<div class="tab" style="left:459px;top:110px;width:36px;height:14px;"></div>
<span class="t" style="left:460.5px;top:109.7px;font:bold 11px/15px 'DejaVu Sans','Liberation Sans',sans-serif;color:#0c0c0c;transform:scaleX(0.871);">Paste</span>
<div class="tab" style="left:497px;top:110px;width:40px;height:14px;"></div>
<span class="t" style="left:498.5px;top:109.7px;font:bold 11px/15px 'DejaVu Sans','Liberation Sans',sans-serif;color:#0c0c0c;transform:scaleX(0.864);">Delete</span>
<div class="tab" style="left:539px;top:110px;width:53px;height:14px;"></div>
<span class="t" style="left:540.5px;top:109.7px;font:bold 11px/15px 'DejaVu Sans','Liberation Sans',sans-serif;color:#0c0c0c;transform:scaleX(0.847);">Duplicate</span>
<div class="tab" style="left:610px;top:110px;width:37.5px;height:14px;"></div>
<span class="t" style="left:611.5px;top:109.7px;font:bold 11px/15px 'DejaVu Sans','Liberation Sans',sans-serif;color:#0c0c0c;transform:scaleX(0.875);">Group</span>
<div class="tab" style="left:650px;top:110px;width:52px;height:14px;"></div>
<span class="t" style="left:651.5px;top:109.7px;font:bold 11px/15px 'DejaVu Sans','Liberation Sans',sans-serif;color:#0c0c0c;transform:scaleX(0.881);">Ungroup</span>
<div class="tab" style="left:704px;top:110px;width:26px;height:14px;"></div>
<span class="t" style="left:705.5px;top:109.7px;font:bold 11px/15px 'DejaVu Sans','Liberation Sans',sans-serif;color:#0c0c0c;transform:scaleX(0.876);">Fold</span>
<div class="tab" style="left:734px;top:110px;width:38px;height:14px;"></div>
<span class="t" style="left:735.5px;top:109.7px;font:bold 11px/15px 'DejaVu Sans','Liberation Sans',sans-serif;color:#0c0c0c;transform:scaleX(0.859);">Unfold</span>
<div class="tab" style="left:775px;top:110px;width:59px;height:14px;"></div>
<span class="t" style="left:776.5px;top:109.7px;font:bold 11px/15px 'DejaVu Sans','Liberation Sans',sans-serif;color:#0c0c0c;transform:scaleX(0.880);">Move into</span>
<div class="tab" style="left:836px;top:110px;width:56.5px;height:14px;"></div>
<span class="t" style="left:837.5px;top:109.7px;font:bold 11px/15px 'DejaVu Sans','Liberation Sans',sans-serif;color:#0c0c0c;transform:scaleX(0.868);">Move out</span>
<div class="tab on" style="left:1140px;top:110px;width:12px;height:14px;"></div>
<span class="t" style="left:1142.0px;top:107.9px;font:13px/17px 'Liberation Sans',sans-serif;color:#0b5247;">C</span>
<div style="left:283px;top:129px;width:948px;height:615px;background:#36383c;border:1px solid #2c2e32;border-bottom-color:#494b4f;border-right-color:#494b4f;"></div>
<span class="t" style="left:282.5px;top:747.0px;font:10px/14px 'Liberation Sans',sans-serif;color:#a8a8a8;letter-spacing:0.6px;transform:scaleX(0.928);">&lt;New Project&gt;.Empty Synth</span>
<svg style="position:absolute;left:283px;top:129px;" width="948" height="615" viewBox="0 0 948 615">
<path d="M28.5 152V131.5H218.5V172" stroke="#7ec828" stroke-width="2" fill="none"/>
<path d="M28.5 152V131.5H218.5V172" stroke="#b8e870" stroke-width="0.6" fill="none"/>
<path d="M41.5 312V248.5H229.5V231" stroke="#d08030" stroke-width="2" fill="none"/>
<path d="M343 534.5H452" stroke="#7ec828" stroke-width="2" fill="none"/>
<path d="M199 275L227 238.5" stroke="#d8d8d8" stroke-width="1"/>
<path d="M518 159L541.5 176.5" stroke="#d8d8d8" stroke-width="1"/>
</svg>
<div style="left:285.5px;top:277px;width:99px;height:43px;background:#0a5a9b;border-radius:5px;box-shadow:3px 4px 4px rgba(0,0,0,.5),inset 0 0 0 1px #0a4a80,inset 2px 2px 1px #2c7cbc,inset -2px -2px 1px #063e6c;"></div>
<span class="t" style="left:288.5px;top:301.0px;font:12px/16px 'Liberation Sans',sans-serif;color:#f4f08a;transform:scaleX(0.850);">MIDI Channel Linker</span>
<svg style="position:absolute;left:307px;top:276px;" width="9" height="9" viewBox="0 0 9 9"><path d="M4.5 1L8.0 4.5L4.5 8.0L1 4.5Z" fill="#fff"/></svg>
<svg style="position:absolute;left:330.5px;top:276px;" width="9" height="9" viewBox="0 0 9 9"><path d="M4.5 1L8.0 4.5L4.5 8.0L1 4.5Z" fill="#fff"/></svg>
<svg style="position:absolute;left:354.5px;top:276px;" width="9" height="9" viewBox="0 0 9 9"><path d="M4.5 1L8.0 4.5L4.5 8.0L1 4.5Z" fill="#fff"/></svg>
<span class="t" style="left:299.5px;top:285.4px;font:10px/14px 'Liberation Sans',sans-serif;color:#fff;transform:scaleX(0.940);">CConCSyn</span>
<span class="t" style="left:351.5px;top:285.4px;font:10px/14px 'Liberation Sans',sans-serif;color:#fff;transform:scaleX(0.872);">Link</span>
<div style="left:495.5px;top:280px;width:10px;height:10px;background:radial-gradient(circle at 35% 30%,#f08080,#a81422 50%,#4a0610);border-radius:50%;box-shadow:1px 2px 2px rgba(0,0,0,.5);"></div>
<svg style="position:absolute;left:514px;top:277px;" width="10" height="22" viewBox="0 0 10 22"><path d="M5 0L8 12H6V22H4V12H2Z" fill="#b8b8a0"/></svg>
<div style="left:457.5px;top:296.5px;width:107px;height:65px;background:#0a5a9b;border-radius:5px;box-shadow:3px 4px 4px rgba(0,0,0,.5),inset 0 0 0 1px #0a4a80,inset 2px 2px 1px #2c7cbc,inset -2px -2px 1px #063e6c;"></div>
<span class="t" style="left:461.0px;top:321.0px;font:12px/16px 'Liberation Sans',sans-serif;color:#f4f08a;transform:scaleX(0.857);">MIDI Controller Linker</span>
<svg style="position:absolute;left:497px;top:296px;" width="9" height="9" viewBox="0 0 9 9"><path d="M4.5 1L8.0 4.5L4.5 8.0L1 4.5Z" fill="#fff"/></svg>
<svg style="position:absolute;left:514.5px;top:296.75px;" width="11" height="5.5" viewBox="0 0 11 5.5"><path d="M0 5.5L5.5 0L11.0 5.5Z" fill="#f06850"/></svg>
<span class="t" style="left:495.5px;top:305.4px;font:10px/14px 'Liberation Sans',sans-serif;color:#fff;transform:scaleX(0.782);">Ch</span>
<span class="t" style="left:510.5px;top:305.4px;font:10px/14px 'Liberation Sans',sans-serif;color:#fff;transform:scaleX(0.831);">Mid1</span>
<span class="t" style="left:502.5px;top:339.4px;font:10px/14px 'Liberation Sans',sans-serif;color:#fff;transform:scaleX(0.873);">Midi</span>
<svg style="position:absolute;left:505.5px;top:354.75px;" width="11" height="5.5" viewBox="0 0 11 5.5"><path d="M0 5.5L5.5 0L11.0 5.5Z" fill="#50e070"/></svg>
<div style="left:500.5px;top:282px;width:2px;height:18px;background:#7ec828;"></div>
<div style="left:511px;top:361px;width:2px;height:17px;background:#d08030;"></div>
<div style="left:285.5px;top:437.5px;width:76px;height:63px;background:#0a5a9b;border-radius:5px;box-shadow:3px 4px 4px rgba(0,0,0,.5),inset 0 0 0 1px #0a4a80,inset 2px 2px 1px #2c7cbc,inset -2px -2px 1px #063e6c;"></div>
<span class="t" style="left:290.0px;top:460.5px;font:12px/16px 'Liberation Sans',sans-serif;color:#f4f08a;transform:scaleX(0.815);">MIDI LEDTimer</span>
<svg style="position:absolute;left:319.5px;top:437px;" width="9" height="9" viewBox="0 0 9 9"><path d="M4.5 1L8.0 4.5L4.5 8.0L1 4.5Z" fill="#fff"/></svg>
<span class="t" style="left:313.5px;top:445.4px;font:10px/14px 'Liberation Sans',sans-serif;color:#fff;transform:scaleX(0.947);">MIDI</span>
<span class="t" style="left:307.0px;top:479.4px;font:10px/14px 'Liberation Sans',sans-serif;color:#fff;transform:scaleX(0.888);">Out Time</span>
<svg style="position:absolute;left:309.5px;top:492px;" width="9" height="9" viewBox="0 0 9 9"><path d="M4.5 1L8.0 4.5L4.5 8.0L1 4.5Z" fill="#fff"/></svg>
<svg style="position:absolute;left:329.5px;top:492px;" width="9" height="9" viewBox="0 0 9 9"><path d="M4.5 1L8.0 4.5L4.5 8.0L1 4.5Z" fill="#fff"/></svg>
<div style="left:312.5px;top:499px;width:3px;height:14px;background:linear-gradient(90deg,#777,#222 60%,#111);"></div>
<div style="left:309px;top:508px;width:10px;height:10px;background:radial-gradient(circle at 35% 30%,#f08080,#a81422 50%,#4a0610);border-radius:50%;box-shadow:1px 2px 2px rgba(0,0,0,.5);"></div>
<div style="left:713.5px;top:192.5px;width:102.5px;height:43px;background:#0a5a9b;border-radius:5px;box-shadow:3px 4px 4px rgba(0,0,0,.5),inset 0 0 0 1px #0a4a80,inset 2px 2px 1px #2c7cbc,inset -2px -2px 1px #063e6c;"></div>
<span class="t" style="left:716.8px;top:217.0px;font:12px/16px 'Liberation Sans',sans-serif;color:#f4f08a;transform:scaleX(0.917);">DynVoicesOfParent</span>
<svg style="position:absolute;left:760.5px;top:192px;" width="9" height="9" viewBox="0 0 9 9"><path d="M4.5 1L8.0 4.5L4.5 8.0L1 4.5Z" fill="#fff"/></svg>
<span class="t" style="left:755.5px;top:201.4px;font:10px/14px 'Liberation Sans',sans-serif;color:#fff;transform:scaleX(0.952);">Voic</span>
<div style="left:834px;top:294.5px;width:124px;height:30.5px;background:#0a5a9b;border-radius:5px;box-shadow:3px 4px 4px rgba(0,0,0,.5),inset 0 0 0 1px #0a4a80,inset 2px 2px 1px #2c7cbc,inset -2px -2px 1px #063e6c;"></div>
<span class="t" style="left:864.5px;top:302.0px;font:12px/16px 'Liberation Sans',sans-serif;color:#f4f08a;transform:scaleX(0.886);">Synth Output</span>
<svg style="position:absolute;left:837px;top:298.5px;" width="5" height="10" viewBox="0 0 5 10"><path d="M0 0L5 5L0 10Z" fill="#50e070"/></svg>
<svg style="position:absolute;left:837px;top:311px;" width="5" height="10" viewBox="0 0 5 10"><path d="M0 0L5 5L0 10Z" fill="#50e070"/></svg>
<span class="t" style="left:843.5px;top:297.4px;font:10px/14px 'Liberation Sans',sans-serif;color:#fff;transform:scaleX(0.974);">inL</span>
<span class="t" style="left:843.5px;top:309.9px;font:10px/14px 'Liberation Sans',sans-serif;color:#fff;transform:scaleX(0.933);">inR</span>
<span class="t" style="left:930.5px;top:297.4px;font:10px/14px 'Liberation Sans',sans-serif;color:#fff;transform:scaleX(0.925);">outL</span>
<span class="t" style="left:928.5px;top:309.9px;font:10px/14px 'Liberation Sans',sans-serif;color:#fff;transform:scaleX(0.947);">outR</span>
<svg style="position:absolute;left:952px;top:298.5px;" width="5" height="10" viewBox="0 0 5 10"><path d="M0 0L5 5L0 10Z" fill="#f06850"/></svg>
<svg style="position:absolute;left:952px;top:311px;" width="5" height="10" viewBox="0 0 5 10"><path d="M0 0L5 5L0 10Z" fill="#f06850"/></svg>
<svg style="position:absolute;left:957px;top:300.5px;" width="22" height="6" viewBox="0 0 22 6"><path d="M0 0.5H12L22 3L12 5.5H0Z" fill="#8a8a80"/><path d="M0 0.5H12L22 3" stroke="#c8c8b8" stroke-width="0.8" fill="none"/></svg>
<svg style="position:absolute;left:957px;top:313px;" width="22" height="6" viewBox="0 0 22 6"><path d="M0 0.5H12L22 3L12 5.5H0Z" fill="#8a8a80"/><path d="M0 0.5H12L22 3" stroke="#c8c8b8" stroke-width="0.8" fill="none"/></svg>
<div style="left:563.5px;top:618.5px;width:3px;height:14.5px;background:linear-gradient(90deg,#777,#222 60%,#111);"></div>
<div style="left:560px;top:613.5px;width:10px;height:10px;background:radial-gradient(circle at 35% 30%,#f08080,#a81422 50%,#4a0610);border-radius:50%;box-shadow:1px 2px 2px rgba(0,0,0,.5);"></div>
<div style="left:504px;top:631.5px;width:121.5px;height:43px;background:#0a5a9b;border-radius:5px;box-shadow:3px 4px 4px rgba(0,0,0,.5),inset 0 0 0 1px #0a4a80,inset 2px 2px 1px #2c7cbc,inset -2px -2px 1px #063e6c;"></div>
<span class="t" style="left:507.5px;top:656.0px;font:12px/16px 'Liberation Sans',sans-serif;color:#f4f08a;transform:scaleX(0.932);">SurfaceInterface</span>
<svg style="position:absolute;left:560.5px;top:631px;" width="9" height="9" viewBox="0 0 9 9"><path d="M4.5 1L8.0 4.5L4.5 8.0L1 4.5Z" fill="#fff"/></svg>
<span class="t" style="left:554.5px;top:639.9px;font:10px/14px 'Liberation Sans',sans-serif;color:#fff;transform:scaleX(0.858);">AddS</span>
<span class="t" style="left:594.5px;top:657.9px;font:10px/14px 'Liberation Sans',sans-serif;color:#fff;transform:scaleX(0.839);">Show</span>
<svg style="position:absolute;left:617px;top:659px;" width="9" height="9" viewBox="0 0 9 9"><path d="M4.5 1L8.0 4.5L4.5 8.0L1 4.5Z" fill="#fff"/></svg>
<div style="left:730px;top:653.5px;width:65.5px;height:22px;background:#0a5a9b;border-radius:5px;box-shadow:3px 4px 4px rgba(0,0,0,.5),inset 0 0 0 1px #0a4a80,inset 2px 2px 1px #2c7cbc,inset -2px -2px 1px #063e6c;"></div>
<span class="t" style="left:766.0px;top:656.5px;font:12px/16px 'Liberation Sans',sans-serif;color:#f4f08a;transform:scaleX(0.847);">Panel</span>
<svg style="position:absolute;left:730px;top:659px;" width="9" height="9" viewBox="0 0 9 9"><path d="M4.5 1L8.0 4.5L4.5 8.0L1 4.5Z" fill="#fff"/></svg>
<span class="t" style="left:740.5px;top:658.4px;font:10px/14px 'Liberation Sans',sans-serif;color:#fff;transform:scaleX(0.839);">Show</span>
<span class="t" style="left:335.5px;top:380.9px;font:13px/17px 'Liberation Sans',sans-serif;color:#f0f0f0;transform:scaleX(0.985);">Connect the MIDI input</span>
<span class="t" style="left:335.5px;top:396.9px;font:13px/17px 'Liberation Sans',sans-serif;color:#f0f0f0;">of your synth layout here</span>
<span class="t" style="left:655.5px;top:255.9px;font:13px/17px 'Liberation Sans',sans-serif;color:#f0f0f0;">Connect the audio output</span>
<span class="t" style="left:655.5px;top:271.9px;font:13px/17px 'Liberation Sans',sans-serif;color:#f0f0f0;">of your synth layout here</span>
<div style="left:963px;top:378.5px;width:278px;height:194px;background:#4b5766;border-radius:5px;border-top:1.5px solid #62707f;border-left:1.5px solid #5a6878;border-bottom:2px solid #39434f;border-right:2px solid #39434f;box-shadow:3px 5px 7px rgba(0,0,0,.5);"></div>
<div style="left:969px;top:407px;width:264px;height:157px;background:#8793a2;border-radius:3px;"></div>
<span class="t" style="left:968.5px;top:384.0px;font:bold 16px/20px 'DejaVu Sans','Liberation Sans',sans-serif;color:#a9b5c4;">Empty Synth</span>
<svg style="position:absolute;left:1180px;top:387px;" width="14" height="15" viewBox="0 0 14 15"><g fill="#4b5766" stroke="#b8c4d0" stroke-width="1"><rect x="4.5" y="0.5" width="9" height="10"/><rect x="2.5" y="2.5" width="9" height="10"/><rect x="0.5" y="4.5" width="9" height="10"/></g><path d="M2 7.5H8M2 9.5H8M2 11.5H8" stroke="#b8c4d0" stroke-width="0.8"/></svg>
<div style="left:1201.7px;top:383.5px;width:14px;height:14px;background:radial-gradient(circle at 40% 30%,#f4f4f4,#b8b8b8 55%,#6a6a6a);border-radius:50%;border:1px solid #1a1a1a;box-shadow:1px 2px 2px rgba(0,0,0,.5);"></div>
<div style="left:1204.7px;top:387.5px;width:8px;height:1.8px;background:#d02020;"></div>
<div style="left:1204.7px;top:390.5px;width:8px;height:1.5px;background:#555;"></div>
<div style="left:1219.6px;top:383.5px;width:14px;height:14px;background:radial-gradient(circle at 40% 30%,#f4f4f4,#b8b8b8 55%,#6a6a6a);border-radius:50%;border:1px solid #1a1a1a;box-shadow:1px 2px 2px rgba(0,0,0,.5);"></div>
<span class="t" style="left:1223.3px;top:384.0px;font:bold 10px/14px 'Liberation Sans',sans-serif;color:#000;">X</span>
<div style="left:972px;top:552px;width:9px;height:9px;background:radial-gradient(circle at 40% 35%,#f0a050,#b85010 60%,#703000);border-radius:50%;box-shadow:0 0 0 1px rgba(190,200,210,.7);"></div>
<div class="pn" style="left:896px;top:37px;width:238px;height:107px;"></div>
<div class="hd" style="left:897px;top:38px;width:236px;height:25px;"></div>
<span class="t" style="left:904.0px;top:42.5px;font:bold 11px/15px 'DejaVu Sans','Liberation Sans',sans-serif;color:#d4d4d4;transform:scaleX(0.894);">Alignment</span>
<div class="hb" style="left:1109px;top:41px;width:20px;height:18px;"></div>
<div style="left:1112.5px;top:43.5px;width:12.5px;height:12.5px;background:linear-gradient(135deg,#a0a2a5,#55575b);"></div>
<svg style="position:absolute;left:1114.8px;top:45.7px;" width="8" height="8" viewBox="0 0 8 8"><path d="M0.8 0.8L7.2 7.2M7.2 0.8L0.8 7.2" stroke="#000" stroke-width="1.4"/></svg>
<div class="hb" style="left:1083px;top:41px;width:22px;height:18px;"></div>
<svg style="position:absolute;left:1083px;top:41px;" width="22" height="18" viewBox="0 0 22 18"><rect x="2.5" y="2" width="11" height="14" fill="#735536"/><rect x="2.5" y="2" width="4" height="14" fill="#a08262"/><rect x="5" y="0.8" width="6" height="2.8" fill="#b8a890"/><rect x="11" y="6.5" width="7.5" height="10" fill="#c4d4cc"/><path d="M12.5 9H17M12.5 11H17M12.5 13H17" stroke="#8aa098" stroke-width=".8"/></svg>
<div class="hb" style="left:1046px;top:41px;width:35px;height:18px;"></div>
<svg style="position:absolute;left:1046px;top:41px;" width="35" height="18" viewBox="0 0 35 18"><path d="M3 11.6L16.5 6L18.6 10.6L5.2 16.3Z" fill="#38393b"/><path d="M3 11.6L16.5 6L17.1 7.3L3.6 12.9Z" fill="#58595b"/><path d="M15.5 1.5L30.5 4L20.5 14.5Z" fill="#2d2e30"/><path d="M15.5 1.5L30.5 4L27 5.2L17.5 3.6Z" fill="#040404"/><ellipse cx="4.1" cy="14" rx="1.3" ry="2.5" transform="rotate(-23 4.1 14)" fill="#1c1d1f"/></svg>
<div class="hb" style="left:1024px;top:41px;width:20px;height:18px;"></div>
<svg style="position:absolute;left:1024px;top:41px;" width="20" height="18" viewBox="0 0 20 18"><rect x="3.5" y="1" width="8" height="11" fill="#7c7e80"/><path d="M5 3.5H10M5 5.5H10M5 7.5H10" stroke="#6a6c6e" stroke-width=".8"/><rect x="8" y="5" width="8.5" height="11.5" fill="#9c9ea0"/><path d="M9.5 8H15M9.5 10H15M9.5 12H15M9.5 14H15" stroke="#7a7c7e" stroke-width=".8"/></svg>
<div class="hb" style="left:1005px;top:41px;width:17px;height:18px;"></div>
<svg style="position:absolute;left:1005px;top:41px;" width="17" height="18" viewBox="0 0 17 18"><path d="M4.6 10.4L7 13.1L11.2 6.8" stroke="#000" stroke-opacity=".5" stroke-width="2.4" fill="none"/><path d="M4 9.8L6.4 12.5L10.6 6.2" stroke="#a50c18" stroke-width="2.2" fill="none"/></svg>
<span class="t" style="left:902.5px;top:68.5px;font:bold 12px/16px 'Liberation Sans',sans-serif;color:#9a9a9a;transform:scaleX(0.767);">Left Offset</span>
<span class="t" style="left:1061.5px;top:67.5px;font:bold 12px/16px 'Liberation Sans',sans-serif;color:#9a9a9a;transform:scaleX(0.757);">Right Offset</span>
<span class="t" style="left:902.5px;top:124.0px;font:bold 12px/16px 'Liberation Sans',sans-serif;color:#9a9a9a;transform:scaleX(0.745);">Top Offset</span>
<span class="t" style="left:1061.0px;top:124.0px;font:bold 12px/16px 'Liberation Sans',sans-serif;color:#9a9a9a;transform:scaleX(0.750);">Bottom Offset</span>
<div style="left:901px;top:84px;width:50px;height:12px;background:#d0d0d0;border-bottom:1px solid #bcbcbc;"></div>
<span class="t" style="left:922.9px;top:82.5px;font:11px/15px 'Liberation Sans',sans-serif;color:#000;">0</span>
<div style="left:954px;top:85px;width:10px;height:10px;background:#b9b9b9;"></div>
<div style="left:1061px;top:84px;width:50px;height:12px;background:#d0d0d0;border-bottom:1px solid #bcbcbc;"></div>
<span class="t" style="left:1082.9px;top:82.5px;font:11px/15px 'Liberation Sans',sans-serif;color:#000;">0</span>
<div style="left:1114px;top:85px;width:10px;height:10px;background:#b9b9b9;"></div>
<div style="left:901px;top:112px;width:50px;height:12px;background:#d0d0d0;border-bottom:1px solid #bcbcbc;"></div>
<span class="t" style="left:922.9px;top:110.5px;font:11px/15px 'Liberation Sans',sans-serif;color:#000;">0</span>
<div style="left:954px;top:113px;width:10px;height:10px;background:#b9b9b9;"></div>
<div style="left:1061px;top:112px;width:50px;height:12px;background:#d0d0d0;border-bottom:1px solid #bcbcbc;"></div>
<span class="t" style="left:1082.9px;top:110.5px;font:11px/15px 'Liberation Sans',sans-serif;color:#000;">0</span>
<div style="left:1114px;top:113px;width:10px;height:10px;background:#b9b9b9;"></div>
<svg style="position:absolute;left:974px;top:84px;" width="17" height="12" viewBox="0 0 17 12"><path d="M0.5 6L6 2V4.5H9V7.5H6V10Z" fill="#d4e8e2"/><rect x="9" y="3" width="7" height="7" fill="#c8747c"/></svg>
<svg style="position:absolute;left:1003px;top:84px;" width="21" height="12" viewBox="0 0 21 12"><path d="M0 6H4M3 3.5L6.5 6L3 8.5Z" stroke="#d4e8e2" fill="#d4e8e2" stroke-width="1.2"/><rect x="7" y="3" width="6.5" height="7" fill="#c8747c"/><path d="M21 6H17M18 3.5L14.5 6L18 8.5Z" stroke="#d4e8e2" fill="#d4e8e2" stroke-width="1.2"/></svg>
<svg style="position:absolute;left:1035px;top:84px;" width="17" height="12" viewBox="0 0 17 12"><rect x="0.5" y="2" width="7" height="7" fill="#c8747c"/><path d="M16.5 6L11 2V4.5H8V7.5H11V10Z" fill="#d4e8e2"/></svg>
<svg style="position:absolute;left:976px;top:108px;" width="12" height="18" viewBox="0 0 12 18"><path d="M6 0.5L2 6H4.5V9H7.5V6H10Z" fill="#fff"/><rect x="2.5" y="9.5" width="7" height="7.5" fill="#c8747c"/></svg>
<svg style="position:absolute;left:1008px;top:107px;" width="12" height="22" viewBox="0 0 12 22"><path d="M6 0V4M3.5 3L6 6.5L8.5 3Z" stroke="#fff" fill="#fff" stroke-width="1.2"/><rect x="3" y="7.5" width="6.5" height="7" fill="#c8747c"/><path d="M6 22V18M3.5 19L6 15.5L8.5 19Z" stroke="#d4e8e2" fill="#d4e8e2" stroke-width="1.2"/></svg>
<svg style="position:absolute;left:1037px;top:108px;" width="12" height="18" viewBox="0 0 12 18"><rect x="2.5" y="1" width="7" height="7.5" fill="#c8747c"/><path d="M6 17.5L2 12H4.5V9H7.5V12H10Z" fill="#d4e8e2"/></svg>
<div class="pn" style="left:1152px;top:40px;width:206px;height:190px;"></div>
<div class="hd" style="left:1153px;top:41px;width:204px;height:25px;"></div>
<span class="t" style="left:1160.0px;top:45.5px;font:bold 11px/15px 'DejaVu Sans','Liberation Sans',sans-serif;color:#d4d4d4;transform:scaleX(0.902);">Texture</span>
<div class="hb" style="left:1333px;top:44px;width:20px;height:18px;"></div>
<div style="left:1336.5px;top:46.5px;width:12.5px;height:12.5px;background:linear-gradient(135deg,#a0a2a5,#55575b);"></div>
<svg style="position:absolute;left:1338.8px;top:48.7px;" width="8" height="8" viewBox="0 0 8 8"><path d="M0.8 0.8L7.2 7.2M7.2 0.8L0.8 7.2" stroke="#000" stroke-width="1.4"/></svg>
<div class="hb" style="left:1307px;top:44px;width:22px;height:18px;"></div>
<svg style="position:absolute;left:1307px;top:44px;" width="22" height="18" viewBox="0 0 22 18"><rect x="2.5" y="2" width="11" height="14" fill="#735536"/><rect x="2.5" y="2" width="4" height="14" fill="#a08262"/><rect x="5" y="0.8" width="6" height="2.8" fill="#b8a890"/><rect x="11" y="6.5" width="7.5" height="10" fill="#c4d4cc"/><path d="M12.5 9H17M12.5 11H17M12.5 13H17" stroke="#8aa098" stroke-width=".8"/></svg>
<div class="hb" style="left:1270px;top:44px;width:35px;height:18px;"></div>
<svg style="position:absolute;left:1270px;top:44px;" width="35" height="18" viewBox="0 0 35 18"><path d="M3 11.6L16.5 6L18.6 10.6L5.2 16.3Z" fill="#38393b"/><path d="M3 11.6L16.5 6L17.1 7.3L3.6 12.9Z" fill="#58595b"/><path d="M15.5 1.5L30.5 4L20.5 14.5Z" fill="#2d2e30"/><path d="M15.5 1.5L30.5 4L27 5.2L17.5 3.6Z" fill="#040404"/><ellipse cx="4.1" cy="14" rx="1.3" ry="2.5" transform="rotate(-23 4.1 14)" fill="#1c1d1f"/></svg>
<div class="hb" style="left:1248px;top:44px;width:20px;height:18px;"></div>
<svg style="position:absolute;left:1248px;top:44px;" width="20" height="18" viewBox="0 0 20 18"><rect x="3.5" y="1" width="8" height="11" fill="#7c7e80"/><path d="M5 3.5H10M5 5.5H10M5 7.5H10" stroke="#6a6c6e" stroke-width=".8"/><rect x="8" y="5" width="8.5" height="11.5" fill="#9c9ea0"/><path d="M9.5 8H15M9.5 10H15M9.5 12H15M9.5 14H15" stroke="#7a7c7e" stroke-width=".8"/></svg>
<div class="hb" style="left:1229px;top:44px;width:17px;height:18px;"></div>
<svg style="position:absolute;left:1229px;top:44px;" width="17" height="18" viewBox="0 0 17 18"><g fill="#e8e8e8"><rect x="4.5" y="11.5" width="1.5" height="1.5"/><rect x="8" y="11.5" width="1.5" height="1.5"/><rect x="11.5" y="11.5" width="1.5" height="1.5"/></g></svg>
<div class="hb" style="left:1210px;top:44px;width:17px;height:18px;"></div>
<svg style="position:absolute;left:1210px;top:44px;" width="17" height="18" viewBox="0 0 17 18"><path d="M4.6 10.4L7 13.1L11.2 6.8" stroke="#000" stroke-opacity=".5" stroke-width="2.4" fill="none"/><path d="M4 9.8L6.4 12.5L10.6 6.2" stroke="#a50c18" stroke-width="2.2" fill="none"/></svg>
<div style="left:1158px;top:74.5px;width:149px;height:149px;background:linear-gradient(135deg,#101114 15%,#2a2c30 45%,#6a6c70 85%);border-radius:50%;"></div>
<div style="left:1160.5px;top:77px;width:144px;height:144px;background:linear-gradient(135deg,#62646a 12%,#4a4c50 40%,#24262a 80%);border-radius:50%;"></div>
<div style="left:1166px;top:82.5px;width:133px;height:133px;background:linear-gradient(135deg,#0c0d0f 20%,#17181b 60%,#222427 90%);border-radius:50%;"></div>
<div style="left:1168.5px;top:85px;width:128px;height:128px;background:#37393d;border-radius:50%;box-shadow:inset 2px 2px 4px rgba(0,0,0,.35);"></div>
<div style="left:1193.5px;top:104.5px;width:81px;height:81px;background:#fff;background-image:linear-gradient(45deg,#b4b4b4 25%,transparent 25%,transparent 75%,#b4b4b4 75%),linear-gradient(45deg,#b4b4b4 25%,transparent 25%,transparent 75%,#b4b4b4 75%);background-size:6px 6px;background-position:0 0,3px 3px;border-right:1px solid #707070;border-bottom:1px solid #707070;"></div>
<div class="vb" style="left:1218px;top:193px;width:27.5px;height:12px;"></div>
<span class="t" style="left:1225.6px;top:192.0px;font:11px/15px 'Liberation Sans',sans-serif;color:#000;">no</span>
<div style="left:1302.5px;top:142.5px;width:10px;height:10px;background:radial-gradient(circle at 35% 28%,#c0c0c0,#444 40%,#080808 85%);border-radius:50%;box-shadow:1px 1px 2px rgba(0,0,0,.6);"></div>
<span class="t" style="left:1295.0px;top:77.0px;font:bold 12px/16px 'Liberation Sans',sans-serif;color:#9a9a9a;transform:scaleX(0.857);">Zoom</span>
<div style="left:1306px;top:100px;width:8px;height:1.5px;background:#9a9a9a;"></div>
<div style="left:1306px;top:115px;width:8px;height:1.5px;background:#9a9a9a;"></div>
<div style="left:1309.2px;top:111.8px;width:1.5px;height:8px;background:#9a9a9a;"></div>
<div class="vb" style="left:1317.5px;top:93.5px;width:26.5px;height:12px;"></div>
<span class="t" style="left:1323.1px;top:92.5px;font:11px/15px 'Liberation Sans',sans-serif;color:#000;">0.0</span>
<div class="vb" style="left:1317.5px;top:109.5px;width:26.5px;height:12px;"></div>
<span class="t" style="left:1324.6px;top:108.5px;font:11px/15px 'Liberation Sans',sans-serif;color:#000;">no</span>
<div class="pn" style="left:1358px;top:39px;width:255px;height:145px;"></div>
<div class="hd" style="left:1359px;top:40px;width:253px;height:25px;"></div>
<span class="t" style="left:1366.0px;top:44.5px;font:bold 11px/15px 'DejaVu Sans','Liberation Sans',sans-serif;color:#7c7c7c;transform:scaleX(0.889);">Text</span>
<div class="hb" style="left:1588px;top:43px;width:20px;height:18px;"></div>
<div style="left:1591.5px;top:45.5px;width:12.5px;height:12.5px;background:linear-gradient(135deg,#a0a2a5,#55575b);"></div>
<svg style="position:absolute;left:1593.8px;top:47.7px;" width="8" height="8" viewBox="0 0 8 8"><path d="M0.8 0.8L7.2 7.2M7.2 0.8L0.8 7.2" stroke="#000" stroke-width="1.4"/></svg>
<div class="hb" style="left:1562px;top:43px;width:22px;height:18px;opacity:.35;"></div>
<svg style="position:absolute;left:1562px;top:43px;opacity:.35;" width="22" height="18" viewBox="0 0 22 18"><rect x="2.5" y="2" width="11" height="14" fill="#735536"/><rect x="2.5" y="2" width="4" height="14" fill="#a08262"/><rect x="5" y="0.8" width="6" height="2.8" fill="#b8a890"/><rect x="11" y="6.5" width="7.5" height="10" fill="#c4d4cc"/><path d="M12.5 9H17M12.5 11H17M12.5 13H17" stroke="#8aa098" stroke-width=".8"/></svg>
<div class="hb" style="left:1525px;top:43px;width:35px;height:18px;opacity:.35;"></div>
<svg style="position:absolute;left:1525px;top:43px;opacity:.35;" width="35" height="18" viewBox="0 0 35 18"><path d="M3 11.6L16.5 6L18.6 10.6L5.2 16.3Z" fill="#38393b"/><path d="M3 11.6L16.5 6L17.1 7.3L3.6 12.9Z" fill="#58595b"/><path d="M15.5 1.5L30.5 4L20.5 14.5Z" fill="#2d2e30"/><path d="M15.5 1.5L30.5 4L27 5.2L17.5 3.6Z" fill="#040404"/><ellipse cx="4.1" cy="14" rx="1.3" ry="2.5" transform="rotate(-23 4.1 14)" fill="#1c1d1f"/></svg>
<div class="hb" style="left:1503px;top:43px;width:20px;height:18px;opacity:.35;"></div>
<svg style="position:absolute;left:1503px;top:43px;opacity:.35;" width="20" height="18" viewBox="0 0 20 18"><rect x="3.5" y="1" width="8" height="11" fill="#7c7e80"/><path d="M5 3.5H10M5 5.5H10M5 7.5H10" stroke="#6a6c6e" stroke-width=".8"/><rect x="8" y="5" width="8.5" height="11.5" fill="#9c9ea0"/><path d="M9.5 8H15M9.5 10H15M9.5 12H15M9.5 14H15" stroke="#7a7c7e" stroke-width=".8"/></svg>
<div class="hb" style="left:1484px;top:43px;width:17px;height:18px;opacity:.35;"></div>
<svg style="position:absolute;left:1484px;top:43px;opacity:.35;" width="17" height="18" viewBox="0 0 17 18"><path d="M4.6 10.4L7 13.1L11.2 6.8" stroke="#000" stroke-opacity=".5" stroke-width="2.4" fill="none"/><path d="M4 9.8L6.4 12.5L10.6 6.2" stroke="#a50c18" stroke-width="2.2" fill="none"/></svg>
<div style="left:1365.5px;top:72px;width:233.5px;height:13px;background:#cfcfcf;border-top:1px solid #eee;border-bottom:1px solid #999;"></div>
<div class="vb" style="left:1365.5px;top:88.5px;width:27.5px;height:14px;"></div>
<span class="t" style="left:1373.1px;top:88.5px;font:11px/15px 'Liberation Sans',sans-serif;color:#000;">no</span>
<div style="left:1396px;top:88.5px;width:187px;height:14px;background:#cfcfcf;border-top:1px solid #eee;border-bottom:1px solid #999;border-right:1px solid #999;"></div>
<svg style="position:absolute;left:1586px;top:90px;" width="14" height="14" viewBox="0 0 14 14"><circle cx="7" cy="7" r="6.5" fill="#2a2c30"/><path d="M3.5 4.5H10.5L7 10.5Z" fill="#d8d8d8"/></svg>
<div style="left:1367px;top:118.5px;width:26px;height:18px;background:#bf4858;border-radius:3px;"></div>
<span class="t" style="left:1370.0px;top:120.5px;font:italic 10px/14px 'Liberation Sans',sans-serif;color:#f0b0b8;transform:scaleX(0.923);">Main</span>
<div style="left:1367px;top:143.5px;width:26px;height:18px;background:#55575a;border-radius:3px;"></div>
<span class="t" style="left:1370.5px;top:145.5px;font:italic 10px/14px 'Liberation Sans',sans-serif;color:#a8a8a8;transform:scaleX(0.923);">Add.</span>
<span class="t" style="left:1400.0px;top:114.0px;font:bold 14px/18px 'Liberation Sans',sans-serif;color:#6c6c6c;transform:scaleX(0.890);">A</span>
<span class="t" style="left:1403.5px;top:112.5px;font:bold 15px/19px 'Liberation Sans',sans-serif;color:#f0f0f0;transform:scaleX(1.016);text-shadow:1px 1px 1px #000;">A</span>
<span class="t" style="left:1430.0px;top:113.0px;font:italic bold 15px/19px 'Liberation Sans',sans-serif;color:#f0f0f0;transform:scaleX(1.108);text-shadow:1px 1px 1px #000;">A</span>
<span class="t" style="left:1457.0px;top:111.4px;font:15px/19px 'Liberation Sans',sans-serif;color:#f0f0f0;">A</span>
<div style="left:1457px;top:129px;width:10.5px;height:1.2px;background:#f0f0f0;"></div>
<div style="left:1497px;top:112px;width:28px;height:28px;background:radial-gradient(circle,rgba(14,15,18,0.8) 0%,rgba(14,15,18,0.8) 45%,rgba(20,21,24,0) 72%);border-radius:50%;"></div>
<div style="left:1500px;top:116px;width:28px;height:28px;background:radial-gradient(circle,rgba(80,82,86,0) 55%,rgba(80,82,86,.35) 64%,rgba(80,82,86,0) 74%);border-radius:50%;clip-path:polygon(100% 30%,100% 100%,30% 100%);"></div>
<div style="left:1499.5px;top:118.5px;width:16px;height:2px;background:#f4f4f4;box-shadow:1px 1px 0 rgba(0,0,0,.6);"></div>
<div style="left:1499.5px;top:122.5px;width:12px;height:2px;background:#f4f4f4;box-shadow:1px 1px 0 rgba(0,0,0,.6);"></div>
<div style="left:1499.5px;top:126.5px;width:16px;height:2px;background:#f4f4f4;box-shadow:1px 1px 0 rgba(0,0,0,.6);"></div>
<div style="left:1499.5px;top:130.5px;width:8px;height:2px;background:#f4f4f4;box-shadow:1px 1px 0 rgba(0,0,0,.6);"></div>
<div style="left:1528.5px;top:118.5px;width:16px;height:2px;background:#f4f4f4;box-shadow:1px 1px 0 rgba(0,0,0,.6);"></div>
<div style="left:1532.5px;top:122.5px;width:12px;height:2px;background:#f4f4f4;box-shadow:1px 1px 0 rgba(0,0,0,.6);"></div>
<div style="left:1528.5px;top:126.5px;width:16px;height:2px;background:#f4f4f4;box-shadow:1px 1px 0 rgba(0,0,0,.6);"></div>
<div style="left:1536.5px;top:130.5px;width:8px;height:2px;background:#f4f4f4;box-shadow:1px 1px 0 rgba(0,0,0,.6);"></div>
<div style="left:1554px;top:118.5px;width:16px;height:2px;background:#f4f4f4;box-shadow:1px 1px 0 rgba(0,0,0,.6);"></div>
<div style="left:1556px;top:122.5px;width:12px;height:2px;background:#f4f4f4;box-shadow:1px 1px 0 rgba(0,0,0,.6);"></div>
<div style="left:1554px;top:126.5px;width:16px;height:2px;background:#f4f4f4;box-shadow:1px 1px 0 rgba(0,0,0,.6);"></div>
<div style="left:1558px;top:130.5px;width:8px;height:2px;background:#f4f4f4;box-shadow:1px 1px 0 rgba(0,0,0,.6);"></div>
<div style="left:1582px;top:118.5px;width:16px;height:2px;background:#f4f4f4;box-shadow:1px 1px 0 rgba(0,0,0,.6);"></div>
<div style="left:1582px;top:122.5px;width:16px;height:2px;background:#f4f4f4;box-shadow:1px 1px 0 rgba(0,0,0,.6);"></div>
<div style="left:1582px;top:126.5px;width:16px;height:2px;background:#f4f4f4;box-shadow:1px 1px 0 rgba(0,0,0,.6);"></div>
<div style="left:1582px;top:130.5px;width:16px;height:2px;background:#f4f4f4;box-shadow:1px 1px 0 rgba(0,0,0,.6);"></div>
<svg style="position:absolute;left:1400px;top:144px;" width="16" height="16" viewBox="0 0 16 16"><rect x="0.8" y="0.8" width="14.4" height="14.4" fill="#26282c" stroke="#f4f4f4" stroke-width="1.4"/></svg>
<span class="t" style="left:1404.0px;top:143.0px;font:bold 11px/15px 'Liberation Sans',sans-serif;color:#f4f4f4;">A</span>
<svg style="position:absolute;left:1428px;top:144px;" width="16" height="16" viewBox="0 0 16 16"><rect x="0.8" y="0.8" width="14.4" height="14.4" fill="#26282c" stroke="#f4f4f4" stroke-width="1.4"/></svg>
<span class="t" style="left:1432.0px;top:144.5px;font:bold 11px/15px 'Liberation Sans',sans-serif;color:#f4f4f4;">A</span>
<div style="left:1453px;top:136px;width:28px;height:28px;background:radial-gradient(circle,rgba(14,15,18,0.85) 0%,rgba(14,15,18,0.85) 45%,rgba(20,21,24,0) 72%);border-radius:50%;"></div>
<div style="left:1456px;top:140px;width:28px;height:28px;background:radial-gradient(circle,rgba(80,82,86,0) 55%,rgba(80,82,86,.35) 64%,rgba(80,82,86,0) 74%);border-radius:50%;clip-path:polygon(100% 30%,100% 100%,30% 100%);"></div>
<svg style="position:absolute;left:1461px;top:145px;" width="16" height="16" viewBox="0 0 16 16"><rect x="0.8" y="0.8" width="14.4" height="14.4" fill="#26282c" stroke="#f4f4f4" stroke-width="1.4"/></svg>
<span class="t" style="left:1465.0px;top:147.0px;font:bold 11px/15px 'Liberation Sans',sans-serif;color:#f4f4f4;">A</span>
<svg style="position:absolute;left:1555px;top:152px;" width="13" height="13" viewBox="0 0 13 13"><path d="M11 1V7.5H3M5.5 4.5L2 7.5L5.5 10.5" stroke="#f4f4f4" stroke-width="1.8" fill="none"/></svg>
<svg style="position:absolute;left:1581px;top:150px;" width="16" height="13" viewBox="0 0 16 13"><path d="M3 1.5V11.5M1 1.5H5M1 11.5H5M3 6.5H14M10.5 3L14 6.5L10.5 10" stroke="#f4f4f4" stroke-width="1.6" fill="none"/></svg>
<div class="pn" style="left:1633px;top:47px;width:229px;height:76px;"></div>
<div class="hd" style="left:1634px;top:48px;width:227px;height:25px;"></div>
<span class="t" style="left:1641.0px;top:52.5px;font:bold 11px/15px 'DejaVu Sans','Liberation Sans',sans-serif;color:#d4d4d4;transform:scaleX(0.904);">Dimensions</span>
<div class="hb" style="left:1837px;top:51px;width:20px;height:18px;"></div>
<div style="left:1840.5px;top:53.5px;width:12.5px;height:12.5px;background:linear-gradient(135deg,#a0a2a5,#55575b);"></div>
<svg style="position:absolute;left:1842.8px;top:55.7px;" width="8" height="8" viewBox="0 0 8 8"><path d="M0.8 0.8L7.2 7.2M7.2 0.8L0.8 7.2" stroke="#000" stroke-width="1.4"/></svg>
<div class="hb" style="left:1811px;top:51px;width:22px;height:18px;"></div>
<svg style="position:absolute;left:1811px;top:51px;" width="22" height="18" viewBox="0 0 22 18"><rect x="2.5" y="2" width="11" height="14" fill="#735536"/><rect x="2.5" y="2" width="4" height="14" fill="#a08262"/><rect x="5" y="0.8" width="6" height="2.8" fill="#b8a890"/><rect x="11" y="6.5" width="7.5" height="10" fill="#c4d4cc"/><path d="M12.5 9H17M12.5 11H17M12.5 13H17" stroke="#8aa098" stroke-width=".8"/></svg>
<div class="hb" style="left:1774px;top:51px;width:35px;height:18px;"></div>
<svg style="position:absolute;left:1774px;top:51px;" width="35" height="18" viewBox="0 0 35 18"><path d="M3 11.6L16.5 6L18.6 10.6L5.2 16.3Z" fill="#38393b"/><path d="M3 11.6L16.5 6L17.1 7.3L3.6 12.9Z" fill="#58595b"/><path d="M15.5 1.5L30.5 4L20.5 14.5Z" fill="#2d2e30"/><path d="M15.5 1.5L30.5 4L27 5.2L17.5 3.6Z" fill="#040404"/><ellipse cx="4.1" cy="14" rx="1.3" ry="2.5" transform="rotate(-23 4.1 14)" fill="#1c1d1f"/></svg>
<div class="hb" style="left:1752px;top:51px;width:20px;height:18px;"></div>
<svg style="position:absolute;left:1752px;top:51px;" width="20" height="18" viewBox="0 0 20 18"><rect x="3.5" y="1" width="8" height="11" fill="#7c7e80"/><path d="M5 3.5H10M5 5.5H10M5 7.5H10" stroke="#6a6c6e" stroke-width=".8"/><rect x="8" y="5" width="8.5" height="11.5" fill="#9c9ea0"/><path d="M9.5 8H15M9.5 10H15M9.5 12H15M9.5 14H15" stroke="#7a7c7e" stroke-width=".8"/></svg>
<div class="hb" style="left:1733px;top:51px;width:17px;height:18px;"></div>
<svg style="position:absolute;left:1733px;top:51px;" width="17" height="18" viewBox="0 0 17 18"><path d="M4.6 10.4L7 13.1L11.2 6.8" stroke="#000" stroke-opacity=".5" stroke-width="2.4" fill="none"/><path d="M4 9.8L6.4 12.5L10.6 6.2" stroke="#30c838" stroke-width="2.2" fill="none"/></svg>
<div style="left:1642px;top:80px;width:48px;height:10.5px;background:#bc4a58;border-radius:5px;"></div>
<span class="t" style="left:1659.0px;top:79.0px;font:italic 9px/13px 'Liberation Sans',sans-serif;color:#f0b0b8;">GO</span>
<div style="left:1642px;top:93.5px;width:48px;height:10.5px;background:#55575a;border-radius:5px;"></div>
<span class="t" style="left:1650.5px;top:92.5px;font:italic 9px/13px 'Liberation Sans',sans-serif;color:#b0b0b0;transform:scaleX(1.051);">Module</span>
<div style="left:1642px;top:106px;width:48px;height:10.5px;background:#55575a;border-radius:5px;"></div>
<span class="t" style="left:1647.5px;top:105.0px;font:italic 9px/13px 'Liberation Sans',sans-serif;color:#b0b0b0;">ViewTree</span>
<div class="vb" style="left:1724.5px;top:80.5px;width:43px;height:13.5px;"></div>
<span class="t" style="left:1736.8px;top:80.2px;font:11px/15px 'Liberation Sans',sans-serif;color:#000;">952</span>
<div class="vb" style="left:1802px;top:80.5px;width:43.5px;height:13.5px;"></div>
<span class="t" style="left:1814.6px;top:80.2px;font:11px/15px 'Liberation Sans',sans-serif;color:#000;">282</span>
<div class="vb" style="left:1724.5px;top:100.5px;width:43px;height:13.5px;"></div>
<span class="t" style="left:1736.8px;top:100.2px;font:11px/15px 'Liberation Sans',sans-serif;color:#000;">347</span>
<div class="vb" style="left:1802px;top:100.5px;width:43.5px;height:13.5px;"></div>
<span class="t" style="left:1814.6px;top:100.2px;font:11px/15px 'Liberation Sans',sans-serif;color:#000;">197</span>
<svg style="position:absolute;left:1705px;top:80px;" width="15" height="14" viewBox="0 0 15 14"><rect x="3.5" y="1" width="10.5" height="11.5" rx="3" fill="none" stroke="#8c8e91" stroke-width="1.3"/><rect x="0.7" y="4" width="5" height="6" fill="#36383c" stroke="#8c8e91" stroke-width="1.2"/></svg>
<svg style="position:absolute;left:1705px;top:99px;" width="15" height="16" viewBox="0 0 15 16"><rect x="1.5" y="0.8" width="11.5" height="10.5" rx="3" fill="none" stroke="#8c8e91" stroke-width="1.3"/><rect x="4.5" y="9" width="6" height="5.5" fill="#36383c" stroke="#8c8e91" stroke-width="1.2"/></svg>
<svg style="position:absolute;left:1783px;top:80px;" width="15" height="14" viewBox="0 0 15 14"><rect x="0.8" y="0.8" width="13" height="12" rx="3.5" fill="none" stroke="#8c8e91" stroke-width="1.3"/><path d="M3 7H12M5 4.5L2.5 7L5 9.5M10 4.5L12.5 7L10 9.5" stroke="#8c8e91" stroke-width="1.5" fill="none"/></svg>
<svg style="position:absolute;left:1783px;top:100px;" width="15" height="15" viewBox="0 0 15 15"><rect x="1" y="0.8" width="12.5" height="13" rx="3.5" fill="none" stroke="#8c8e91" stroke-width="1.3"/><path d="M7.2 3V12M4.8 5L7.2 2.5L9.6 5M4.8 10L7.2 12.5L9.6 10" stroke="#8c8e91" stroke-width="1.5" fill="none"/></svg>
<div class="pn" style="left:1402px;top:262px;width:406px;height:274px;"></div>
<div class="hd" style="left:1403px;top:263px;width:404px;height:25px;"></div>
<span class="t" style="left:1410.0px;top:267.5px;font:bold 11px/15px 'DejaVu Sans','Liberation Sans',sans-serif;color:#d4d4d4;transform:scaleX(0.851);">Gradient</span>
<div class="hb" style="left:1783px;top:266px;width:20px;height:18px;"></div>
<div style="left:1786.5px;top:268.5px;width:12.5px;height:12.5px;background:linear-gradient(135deg,#a0a2a5,#55575b);"></div>
<svg style="position:absolute;left:1788.8px;top:270.7px;" width="8" height="8" viewBox="0 0 8 8"><path d="M0.8 0.8L7.2 7.2M7.2 0.8L0.8 7.2" stroke="#000" stroke-width="1.4"/></svg>
<div class="hb" style="left:1757px;top:266px;width:22px;height:18px;"></div>
<svg style="position:absolute;left:1757px;top:266px;" width="22" height="18" viewBox="0 0 22 18"><rect x="2.5" y="2" width="11" height="14" fill="#735536"/><rect x="2.5" y="2" width="4" height="14" fill="#a08262"/><rect x="5" y="0.8" width="6" height="2.8" fill="#b8a890"/><rect x="11" y="6.5" width="7.5" height="10" fill="#c4d4cc"/><path d="M12.5 9H17M12.5 11H17M12.5 13H17" stroke="#8aa098" stroke-width=".8"/></svg>
<div class="hb" style="left:1720px;top:266px;width:35px;height:18px;"></div>
<svg style="position:absolute;left:1720px;top:266px;" width="35" height="18" viewBox="0 0 35 18"><path d="M3 11.6L16.5 6L18.6 10.6L5.2 16.3Z" fill="#38393b"/><path d="M3 11.6L16.5 6L17.1 7.3L3.6 12.9Z" fill="#58595b"/><path d="M15.5 1.5L30.5 4L20.5 14.5Z" fill="#2d2e30"/><path d="M15.5 1.5L30.5 4L27 5.2L17.5 3.6Z" fill="#040404"/><ellipse cx="4.1" cy="14" rx="1.3" ry="2.5" transform="rotate(-23 4.1 14)" fill="#1c1d1f"/></svg>
<div class="hb" style="left:1698px;top:266px;width:20px;height:18px;"></div>
<svg style="position:absolute;left:1698px;top:266px;" width="20" height="18" viewBox="0 0 20 18"><rect x="3.5" y="1" width="8" height="11" fill="#7c7e80"/><path d="M5 3.5H10M5 5.5H10M5 7.5H10" stroke="#6a6c6e" stroke-width=".8"/><rect x="8" y="5" width="8.5" height="11.5" fill="#9c9ea0"/><path d="M9.5 8H15M9.5 10H15M9.5 12H15M9.5 14H15" stroke="#7a7c7e" stroke-width=".8"/></svg>
<div class="hb" style="left:1679px;top:266px;width:17px;height:18px;"></div>
<svg style="position:absolute;left:1679px;top:266px;" width="17" height="18" viewBox="0 0 17 18"><g fill="#e8e8e8"><rect x="4.5" y="11.5" width="1.5" height="1.5"/><rect x="8" y="11.5" width="1.5" height="1.5"/><rect x="11.5" y="11.5" width="1.5" height="1.5"/></g></svg>
<div class="hb" style="left:1660px;top:266px;width:17px;height:18px;"></div>
<svg style="position:absolute;left:1660px;top:266px;" width="17" height="18" viewBox="0 0 17 18"><path d="M4.6 10.4L7 13.1L11.2 6.8" stroke="#000" stroke-opacity=".5" stroke-width="2.4" fill="none"/><path d="M4 9.8L6.4 12.5L10.6 6.2" stroke="#a50c18" stroke-width="2.2" fill="none"/></svg>
<div style="left:1411.5px;top:298px;width:389.5px;height:36px;background:#808080;border-top:2px solid #161719;border-left:2px solid #161719;border-right:1px solid #55575a;border-bottom:1px solid #55575a;"></div>
<span class="t" style="left:1411.0px;top:352.5px;font:bold 12px/16px 'Liberation Sans',sans-serif;color:#9a9a9a;transform:scaleX(0.775);">Type</span>
<div style="left:1462px;top:348px;width:28px;height:28px;background:radial-gradient(circle,rgba(14,15,18,0.85) 0%,rgba(14,15,18,0.85) 45%,rgba(20,21,24,0) 72%);border-radius:50%;"></div>
<div style="left:1465px;top:352px;width:28px;height:28px;background:radial-gradient(circle,rgba(80,82,86,0) 55%,rgba(80,82,86,.35) 64%,rgba(80,82,86,0) 74%);border-radius:50%;clip-path:polygon(100% 30%,100% 100%,30% 100%);"></div>
<div style="left:1442.5px;top:354px;width:14px;height:14px;background:radial-gradient(circle at 35% 30%,#fff 0%,#68b0e0 30%,#e8d820 90%);border-radius:50%;box-shadow:0 1px 2px rgba(0,0,0,.7);"></div>
<div style="left:1442.5px;top:354px;width:14px;height:14px;background:linear-gradient(180deg,#3a98e8 10%,#a8c878 55%,#f0e020 90%);border-radius:50%;"></div>
<div style="left:1469px;top:354px;width:14px;height:14px;background:radial-gradient(circle,#3a90e8 0%,#5aa0d8 30%,#e8d820 62%,#f0e020 100%);border-radius:50%;"></div>
<div style="left:1493.5px;top:354px;width:14px;height:14px;background:conic-gradient(#3a98e8 0 10%,#f0e020 15% 35%,#3a98e8 40% 60%,#f0e020 65% 85%,#3a98e8 90%);border-radius:50%;"></div>
<span class="t" style="left:1545.5px;top:352.0px;font:bold 12px/16px 'Liberation Sans',sans-serif;color:#9a9a9a;transform:scaleX(0.796);">Order</span>
<div style="left:1576px;top:348px;width:28px;height:28px;background:radial-gradient(circle,rgba(14,15,18,0.85) 0%,rgba(14,15,18,0.85) 45%,rgba(20,21,24,0) 72%);border-radius:50%;"></div>
<div style="left:1579px;top:352px;width:28px;height:28px;background:radial-gradient(circle,rgba(80,82,86,0) 55%,rgba(80,82,86,.35) 64%,rgba(80,82,86,0) 74%);border-radius:50%;clip-path:polygon(100% 30%,100% 100%,30% 100%);"></div>
<div style="left:1583px;top:353.5px;width:14px;height:14px;background:linear-gradient(90deg,#f0e020 15%,#b8d070 50%,#58a8e0 90%);border-radius:50%;"></div>
<div style="left:1607.5px;top:354px;width:14px;height:14px;background:linear-gradient(90deg,#f0e020 5%,#58a8e0 45%,#58a8e0 55%,#f0e020 95%);border-radius:50%;"></div>
<span class="t" style="left:1655.0px;top:352.0px;font:bold 12px/16px 'Liberation Sans',sans-serif;color:#9a9a9a;transform:scaleX(0.796);">Invert</span>
<div style="left:1692.8px;top:354.8px;width:10.5px;height:10.5px;background:#fff;"></div>
<svg style="position:absolute;left:1692.8px;top:354.8px;" width="10.5" height="10.5" viewBox="0 0 10.5 10.5"><path d="M1.8 1.8L8.7 8.7M8.7 1.8L1.8 8.7" stroke="#000" stroke-width="2.3"/></svg>
<span class="t" style="left:1728.0px;top:351.5px;font:bold 12px/16px 'Liberation Sans',sans-serif;color:#9a9a9a;transform:scaleX(0.750);">Loops</span>
<div class="vb" style="left:1761.5px;top:353px;width:26.5px;height:12px;"></div>
<span class="t" style="left:1768.6px;top:352.0px;font:11px/15px 'Liberation Sans',sans-serif;color:#000;">no</span>
<div style="left:1413px;top:382.5px;width:149px;height:149px;background:linear-gradient(135deg,#101114 15%,#2a2c30 45%,#6a6c70 85%);border-radius:50%;"></div>
<div style="left:1415.5px;top:385px;width:144px;height:144px;background:linear-gradient(135deg,#62646a 12%,#4a4c50 40%,#24262a 80%);border-radius:50%;"></div>
<div style="left:1421px;top:390.5px;width:133px;height:133px;background:linear-gradient(135deg,#0c0d0f 20%,#17181b 60%,#222427 90%);border-radius:50%;"></div>
<div style="left:1423.5px;top:393px;width:128px;height:128px;background:#37393d;border-radius:50%;box-shadow:inset 2px 2px 4px rgba(0,0,0,.35);"></div>
<span class="t" style="left:1473.5px;top:396.0px;font:bold 12px/16px 'Liberation Sans',sans-serif;color:#9a9a9a;transform:scaleX(0.780);">Angle</span>
<div style="left:1448.5px;top:415.5px;width:81px;height:81px;background:#fff;background-image:linear-gradient(45deg,#b4b4b4 25%,transparent 25%,transparent 75%,#b4b4b4 75%),linear-gradient(45deg,#b4b4b4 25%,transparent 25%,transparent 75%,#b4b4b4 75%);background-size:6px 6px;background-position:0 0,3px 3px;border-right:1px solid #707070;border-bottom:1px solid #707070;"></div>
<div class="vb" style="left:1474.5px;top:501.5px;width:27px;height:12.5px;"></div>
<span class="t" style="left:1481.9px;top:500.8px;font:11px/15px 'Liberation Sans',sans-serif;color:#000;">no</span>
<div style="left:1557.5px;top:450.5px;width:10px;height:10px;background:radial-gradient(circle at 35% 28%,#c0c0c0,#444 40%,#080808 85%);border-radius:50%;box-shadow:1px 1px 2px rgba(0,0,0,.6);"></div>
<div style="left:1572px;top:380px;width:221px;height:147px;border:1px solid #4a4c50;"></div>
<div style="left:1571px;top:381.5px;width:143px;height:143px;background:radial-gradient(circle,transparent 37.5px,rgba(0,0,0,.55) 45.5px,rgba(0,0,0,.55) 65.5px,rgba(0,0,0,0) 70.5px);border-radius:50%;left:1572.5px;top:383.5px;"></div>
<div style="left:1578px;top:388.5px;width:129px;height:129px;background:conic-gradient(from 90deg,#ff0000,#ffff00,#00ff00,#00ffff,#0000ff,#ff00ff,#ff0000);border-radius:50%;-webkit-mask:radial-gradient(circle,transparent 45.5px,#000 48.0px,#000 63.0px,transparent 65.0px);mask:radial-gradient(circle,transparent 45.5px,#000 48.0px,#000 63.0px,transparent 65.0px);"></div>
<div style="left:1578px;top:388.5px;width:129px;height:129px;background:radial-gradient(circle,transparent 45.5px,rgba(0,0,0,.5) 47.0px,rgba(0,0,0,0) 53.5px,rgba(0,0,0,0) 58.5px,rgba(0,0,0,.35) 64.5px,transparent 65.5px);border-radius:50%;"></div>
<div style="left:1617.5px;top:428.5px;width:51px;height:52px;background-image:linear-gradient(180deg,rgba(255,16,160,0) 0%,rgba(255,16,160,.55) 50%,rgba(255,16,160,1) 100%),linear-gradient(90deg,#000 0%,#fff 100%);border-right:1px solid #555;border-bottom:1px solid #555;"></div>
<div style="left:1682.5px;top:416px;width:7px;height:7px;background:radial-gradient(circle at 35% 30%,#fff 0%,#e01890 30%,#50002a 90%);border-radius:50%;box-shadow:0 1px 2px rgba(0,0,0,.7);"></div>
<div style="left:1639.5px;top:426.5px;width:7px;height:7px;background:radial-gradient(circle at 35% 30%,#fff 0%,#303030 30%,#000 90%);border-radius:50%;box-shadow:0 1px 2px rgba(0,0,0,.7);"></div>
<span class="t" style="left:1691.5px;top:383.0px;font:bold 12px/16px 'Liberation Sans',sans-serif;color:#9a9a9a;transform:scaleX(0.764);">Result</span>
<div style="left:1723.5px;top:384.5px;width:61px;height:31px;background:#808080;border-top:1px solid #2a2c30;border-left:1px solid #2a2c30;border-right:1px solid #5a5c60;border-bottom:1px solid #5a5c60;"></div>
<div class="vb" style="left:1757.5px;top:425.5px;width:26.5px;height:13px;"></div>
<span class="t" style="left:1761.6px;top:425.0px;font:11px/15px 'Liberation Sans',sans-serif;color:#000;">128</span>
<span class="t" style="left:1761.5px;top:438.0px;font:bold 12px/16px 'Liberation Sans',sans-serif;color:#9a9a9a;transform:scaleX(0.750);">Red</span>
<div class="vb" style="left:1757.5px;top:460.5px;width:26.5px;height:13px;"></div>
<span class="t" style="left:1761.6px;top:460.0px;font:11px/15px 'Liberation Sans',sans-serif;color:#000;">128</span>
<span class="t" style="left:1756.5px;top:473.0px;font:bold 12px/16px 'Liberation Sans',sans-serif;color:#9a9a9a;transform:scaleX(0.779);">Green</span>
<div class="vb" style="left:1757.5px;top:495.5px;width:26.5px;height:13px;"></div>
<span class="t" style="left:1761.6px;top:495.0px;font:11px/15px 'Liberation Sans',sans-serif;color:#000;">128</span>
<span class="t" style="left:1760.5px;top:508.0px;font:bold 12px/16px 'Liberation Sans',sans-serif;color:#9a9a9a;transform:scaleX(0.769);">Blue</span>
<div class="vb" style="left:1707.5px;top:494px;width:27px;height:12.5px;"></div>
<span class="t" style="left:1711.8px;top:493.2px;font:11px/15px 'Liberation Sans',sans-serif;color:#000;">255</span>
<span class="t" style="left:1706.5px;top:508.0px;font:bold 12px/16px 'Liberation Sans',sans-serif;color:#9a9a9a;transform:scaleX(0.750);">Opacity</span>
<div class="pn" style="left:1385px;top:560px;width:208px;height:118px;"></div>
<div class="hd" style="left:1386px;top:561px;width:206px;height:25px;"></div>
<span class="t" style="left:1393.0px;top:565.5px;font:bold 11px/15px 'DejaVu Sans','Liberation Sans',sans-serif;color:#d4d4d4;transform:scaleX(0.902);">Shadow</span>
<div class="hb" style="left:1568px;top:564px;width:20px;height:18px;"></div>
<div style="left:1571.5px;top:566.5px;width:12.5px;height:12.5px;background:linear-gradient(135deg,#a0a2a5,#55575b);"></div>
<svg style="position:absolute;left:1573.8px;top:568.7px;" width="8" height="8" viewBox="0 0 8 8"><path d="M0.8 0.8L7.2 7.2M7.2 0.8L0.8 7.2" stroke="#000" stroke-width="1.4"/></svg>
<div class="hb" style="left:1542px;top:564px;width:22px;height:18px;"></div>
<svg style="position:absolute;left:1542px;top:564px;" width="22" height="18" viewBox="0 0 22 18"><rect x="2.5" y="2" width="11" height="14" fill="#735536"/><rect x="2.5" y="2" width="4" height="14" fill="#a08262"/><rect x="5" y="0.8" width="6" height="2.8" fill="#b8a890"/><rect x="11" y="6.5" width="7.5" height="10" fill="#c4d4cc"/><path d="M12.5 9H17M12.5 11H17M12.5 13H17" stroke="#8aa098" stroke-width=".8"/></svg>
<div class="hb" style="left:1505px;top:564px;width:35px;height:18px;"></div>
<svg style="position:absolute;left:1505px;top:564px;" width="35" height="18" viewBox="0 0 35 18"><path d="M3 11.6L16.5 6L18.6 10.6L5.2 16.3Z" fill="#38393b"/><path d="M3 11.6L16.5 6L17.1 7.3L3.6 12.9Z" fill="#58595b"/><path d="M15.5 1.5L30.5 4L20.5 14.5Z" fill="#2d2e30"/><path d="M15.5 1.5L30.5 4L27 5.2L17.5 3.6Z" fill="#040404"/><ellipse cx="4.1" cy="14" rx="1.3" ry="2.5" transform="rotate(-23 4.1 14)" fill="#1c1d1f"/></svg>
<div class="hb" style="left:1483px;top:564px;width:20px;height:18px;"></div>
<svg style="position:absolute;left:1483px;top:564px;" width="20" height="18" viewBox="0 0 20 18"><rect x="3.5" y="1" width="8" height="11" fill="#7c7e80"/><path d="M5 3.5H10M5 5.5H10M5 7.5H10" stroke="#6a6c6e" stroke-width=".8"/><rect x="8" y="5" width="8.5" height="11.5" fill="#9c9ea0"/><path d="M9.5 8H15M9.5 10H15M9.5 12H15M9.5 14H15" stroke="#7a7c7e" stroke-width=".8"/></svg>
<div class="hb" style="left:1464px;top:564px;width:17px;height:18px;"></div>
<svg style="position:absolute;left:1464px;top:564px;" width="17" height="18" viewBox="0 0 17 18"><path d="M4.6 10.4L7 13.1L11.2 6.8" stroke="#000" stroke-opacity=".5" stroke-width="2.4" fill="none"/><path d="M4 9.8L6.4 12.5L10.6 6.2" stroke="#30c838" stroke-width="2.2" fill="none"/></svg>
<span class="t" style="left:1399.0px;top:595.5px;font:bold 12px/16px 'Liberation Sans',sans-serif;color:#9a9a9a;transform:scaleX(0.807);">Feather</span>
<div style="left:1456px;top:604.5px;width:62.5px;height:1px;background:#0e0f11;"></div>
<div style="left:1456px;top:605.5px;width:62.5px;height:1px;background:#4a4c50;"></div>
<div style="left:1463.5px;top:598.7px;width:10px;height:10px;background:radial-gradient(circle at 35% 28%,#c0c0c0,#444 40%,#080808 85%);border-radius:50%;box-shadow:1px 1px 2px rgba(0,0,0,.6);"></div>
<div class="vb" style="left:1536px;top:596.5px;width:27.5px;height:12.5px;"></div>
<span class="t" style="left:1543.6px;top:595.8px;font:11px/15px 'Liberation Sans',sans-serif;color:#000;">10</span>
<span class="t" style="left:1399.0px;top:615.0px;font:bold 12px/16px 'Liberation Sans',sans-serif;color:#9a9a9a;transform:scaleX(0.739);">Offset X</span>
<div style="left:1456px;top:623.5px;width:62.5px;height:1px;background:#0e0f11;"></div>
<div style="left:1456px;top:624.5px;width:62.5px;height:1px;background:#4a4c50;"></div>
<div style="left:1485.5px;top:617.7px;width:10px;height:10px;background:radial-gradient(circle at 35% 28%,#c0c0c0,#444 40%,#080808 85%);border-radius:50%;box-shadow:1px 1px 2px rgba(0,0,0,.6);"></div>
<div class="vb" style="left:1536px;top:616px;width:27.5px;height:12.5px;"></div>
<span class="t" style="left:1546.7px;top:615.2px;font:11px/15px 'Liberation Sans',sans-serif;color:#000;">6</span>
<span class="t" style="left:1399.0px;top:635.0px;font:bold 12px/16px 'Liberation Sans',sans-serif;color:#9a9a9a;transform:scaleX(0.743);">Offset Y</span>
<div style="left:1456px;top:643.5px;width:62.5px;height:1px;background:#0e0f11;"></div>
<div style="left:1456px;top:644.5px;width:62.5px;height:1px;background:#4a4c50;"></div>
<div style="left:1485.5px;top:637.7px;width:10px;height:10px;background:radial-gradient(circle at 35% 28%,#c0c0c0,#444 40%,#080808 85%);border-radius:50%;box-shadow:1px 1px 2px rgba(0,0,0,.6);"></div>
<div class="vb" style="left:1536px;top:636px;width:27.5px;height:12.5px;"></div>
<span class="t" style="left:1546.7px;top:635.2px;font:11px/15px 'Liberation Sans',sans-serif;color:#000;">6</span>
<span class="t" style="left:1399.0px;top:654.5px;font:bold 12px/16px 'Liberation Sans',sans-serif;color:#9a9a9a;transform:scaleX(0.750);">Opacity</span>
<div style="left:1456px;top:663.5px;width:62.5px;height:1px;background:#0e0f11;"></div>
<div style="left:1456px;top:664.5px;width:62.5px;height:1px;background:#4a4c50;"></div>
<div style="left:1475px;top:657.7px;width:10px;height:10px;background:radial-gradient(circle at 35% 28%,#c0c0c0,#444 40%,#080808 85%);border-radius:50%;box-shadow:1px 1px 2px rgba(0,0,0,.6);"></div>
<div class="vb" style="left:1536px;top:655.5px;width:27.5px;height:12.5px;"></div>
<span class="t" style="left:1540.6px;top:654.8px;font:11px/15px 'Liberation Sans',sans-serif;color:#000;">100</span>
<div class="pn" style="left:1169px;top:603px;width:183px;height:175px;"></div>
<div class="hd" style="left:1170px;top:604px;width:181px;height:25px;"></div>
<span class="t" style="left:1177.0px;top:608.5px;font:bold 11px/15px 'DejaVu Sans','Liberation Sans',sans-serif;color:#d4d4d4;transform:scaleX(0.755);">Blit</span>
<div class="hb" style="left:1327px;top:607px;width:20px;height:18px;"></div>
<div style="left:1330.5px;top:609.5px;width:12.5px;height:12.5px;background:linear-gradient(135deg,#a0a2a5,#55575b);"></div>
<svg style="position:absolute;left:1332.8px;top:611.7px;" width="8" height="8" viewBox="0 0 8 8"><path d="M0.8 0.8L7.2 7.2M7.2 0.8L0.8 7.2" stroke="#000" stroke-width="1.4"/></svg>
<div class="hb" style="left:1301px;top:607px;width:22px;height:18px;"></div>
<svg style="position:absolute;left:1301px;top:607px;" width="22" height="18" viewBox="0 0 22 18"><rect x="2.5" y="2" width="11" height="14" fill="#735536"/><rect x="2.5" y="2" width="4" height="14" fill="#a08262"/><rect x="5" y="0.8" width="6" height="2.8" fill="#b8a890"/><rect x="11" y="6.5" width="7.5" height="10" fill="#c4d4cc"/><path d="M12.5 9H17M12.5 11H17M12.5 13H17" stroke="#8aa098" stroke-width=".8"/></svg>
<div class="hb" style="left:1264px;top:607px;width:35px;height:18px;"></div>
<svg style="position:absolute;left:1264px;top:607px;" width="35" height="18" viewBox="0 0 35 18"><path d="M3 11.6L16.5 6L18.6 10.6L5.2 16.3Z" fill="#38393b"/><path d="M3 11.6L16.5 6L17.1 7.3L3.6 12.9Z" fill="#58595b"/><path d="M15.5 1.5L30.5 4L20.5 14.5Z" fill="#2d2e30"/><path d="M15.5 1.5L30.5 4L27 5.2L17.5 3.6Z" fill="#040404"/><ellipse cx="4.1" cy="14" rx="1.3" ry="2.5" transform="rotate(-23 4.1 14)" fill="#1c1d1f"/></svg>
<div class="hb" style="left:1242px;top:607px;width:20px;height:18px;"></div>
<svg style="position:absolute;left:1242px;top:607px;" width="20" height="18" viewBox="0 0 20 18"><rect x="3.5" y="1" width="8" height="11" fill="#7c7e80"/><path d="M5 3.5H10M5 5.5H10M5 7.5H10" stroke="#6a6c6e" stroke-width=".8"/><rect x="8" y="5" width="8.5" height="11.5" fill="#9c9ea0"/><path d="M9.5 8H15M9.5 10H15M9.5 12H15M9.5 14H15" stroke="#7a7c7e" stroke-width=".8"/></svg>
<div class="hb" style="left:1223px;top:607px;width:17px;height:18px;"></div>
<svg style="position:absolute;left:1223px;top:607px;" width="17" height="18" viewBox="0 0 17 18"><path d="M4.6 10.4L7 13.1L11.2 6.8" stroke="#000" stroke-opacity=".5" stroke-width="2.4" fill="none"/><path d="M4 9.8L6.4 12.5L10.6 6.2" stroke="#30c838" stroke-width="2.2" fill="none"/></svg>
<span class="t" style="left:1181.5px;top:636.5px;font:10px/14px 'DejaVu Sans','Liberation Sans',sans-serif;color:#a4a4a4;transform:scaleX(0.962);">Opacity</span>
<div style="left:1245.5px;top:644.5px;width:48px;height:1px;background:#0e0f11;"></div>
<div style="left:1245.5px;top:645.5px;width:48px;height:1px;background:#4a4c50;"></div>
<div style="left:1288.5px;top:639px;width:10px;height:10px;background:radial-gradient(circle at 35% 28%,#c0c0c0,#444 40%,#080808 85%);border-radius:50%;box-shadow:1px 1px 2px rgba(0,0,0,.6);"></div>
<div class="vb" style="left:1303.5px;top:638px;width:36.5px;height:13px;"></div>
<span class="t" style="left:1312.6px;top:637.5px;font:11px/15px 'Liberation Sans',sans-serif;color:#000;">255</span>
<span class="t" style="left:1182.5px;top:663.0px;font:10px/14px 'DejaVu Sans','Liberation Sans',sans-serif;color:#a4a4a4;transform:scaleX(0.923);">Blitting</span>
<div class="vb" style="left:1191.5px;top:678.5px;width:55.5px;height:14px;"></div>
<span class="t" style="left:1194.5px;top:678.5px;font:11px/15px 'Liberation Sans',sans-serif;color:#000;transform:scaleX(0.931);">Normal</span>
<span class="t" style="left:1181.5px;top:715.0px;font:10px/14px 'DejaVu Sans','Liberation Sans',sans-serif;color:#a4a4a4;transform:scaleX(0.955);">BumpMode</span>
<div class="vb" style="left:1191.5px;top:730.5px;width:55.5px;height:14px;"></div>
<span class="t" style="left:1194.5px;top:730.5px;font:11px/15px 'Liberation Sans',sans-serif;color:#000;transform:scaleX(0.922);">Simple</span>
<svg style="position:absolute;left:1252px;top:679.5px;" width="14" height="14" viewBox="0 0 14 14"><circle cx="7" cy="7" r="6.5" fill="#2a2c30"/><path d="M3.5 4.5H10.5L7 10.5Z" fill="#d8d8d8"/></svg>
<svg style="position:absolute;left:1252px;top:731px;" width="14" height="14" viewBox="0 0 14 14"><circle cx="7" cy="7" r="6.5" fill="#2a2c30"/><path d="M3.5 4.5H10.5L7 10.5Z" fill="#d8d8d8"/></svg>
<div class="vb" style="left:1303.5px;top:752px;width:36.5px;height:13px;"></div>
<div class="pn" style="left:905px;top:752px;width:300px;height:330px;"></div>
<div class="hd" style="left:906px;top:753px;width:298px;height:25px;"></div>
<span class="t" style="left:913.0px;top:757.5px;font:bold 11px/15px 'DejaVu Sans','Liberation Sans',sans-serif;color:#d4d4d4;transform:scaleX(0.860);">Bitmap</span>
<div class="hb" style="left:1180px;top:756px;width:20px;height:18px;"></div>
<div style="left:1183.5px;top:758.5px;width:12.5px;height:12.5px;background:linear-gradient(135deg,#a0a2a5,#55575b);"></div>
<svg style="position:absolute;left:1185.8px;top:760.7px;" width="8" height="8" viewBox="0 0 8 8"><path d="M0.8 0.8L7.2 7.2M7.2 0.8L0.8 7.2" stroke="#000" stroke-width="1.4"/></svg>
<div class="hb" style="left:1154px;top:756px;width:22px;height:18px;"></div>
<svg style="position:absolute;left:1154px;top:756px;" width="22" height="18" viewBox="0 0 22 18"><rect x="2.5" y="2" width="11" height="14" fill="#735536"/><rect x="2.5" y="2" width="4" height="14" fill="#a08262"/><rect x="5" y="0.8" width="6" height="2.8" fill="#b8a890"/><rect x="11" y="6.5" width="7.5" height="10" fill="#c4d4cc"/><path d="M12.5 9H17M12.5 11H17M12.5 13H17" stroke="#8aa098" stroke-width=".8"/></svg>
<div class="hb" style="left:1117px;top:756px;width:35px;height:18px;"></div>
<svg style="position:absolute;left:1117px;top:756px;" width="35" height="18" viewBox="0 0 35 18"><path d="M3 11.6L16.5 6L18.6 10.6L5.2 16.3Z" fill="#38393b"/><path d="M3 11.6L16.5 6L17.1 7.3L3.6 12.9Z" fill="#58595b"/><path d="M15.5 1.5L30.5 4L20.5 14.5Z" fill="#2d2e30"/><path d="M15.5 1.5L30.5 4L27 5.2L17.5 3.6Z" fill="#040404"/><ellipse cx="4.1" cy="14" rx="1.3" ry="2.5" transform="rotate(-23 4.1 14)" fill="#1c1d1f"/></svg>
<div class="hb" style="left:1095px;top:756px;width:20px;height:18px;"></div>
<svg style="position:absolute;left:1095px;top:756px;" width="20" height="18" viewBox="0 0 20 18"><rect x="3.5" y="1" width="8" height="11" fill="#7c7e80"/><path d="M5 3.5H10M5 5.5H10M5 7.5H10" stroke="#6a6c6e" stroke-width=".8"/><rect x="8" y="5" width="8.5" height="11.5" fill="#9c9ea0"/><path d="M9.5 8H15M9.5 10H15M9.5 12H15M9.5 14H15" stroke="#7a7c7e" stroke-width=".8"/></svg>
<div class="hb" style="left:1076px;top:756px;width:17px;height:18px;"></div>
<svg style="position:absolute;left:1076px;top:756px;" width="17" height="18" viewBox="0 0 17 18"><g fill="#e8e8e8"><rect x="4.5" y="11.5" width="1.5" height="1.5"/><rect x="8" y="11.5" width="1.5" height="1.5"/><rect x="11.5" y="11.5" width="1.5" height="1.5"/></g></svg>
<div class="in" style="left:913px;top:784.5px;width:277px;height:300px;"></div>
<div style="left:934px;top:804px;width:30px;height:30px;background:#000;"></div>
<div style="left:935.5px;top:805.5px;width:27px;height:27px;background:linear-gradient(135deg,#e8e8e8,#a8a8a8 50%,#8a8a8a);border-radius:5px;border:1px solid #707070;"></div>
<div style="left:943.9px;top:805px;width:1.3px;height:28px;background:#f01868;"></div>
<div style="left:952.9px;top:805px;width:1.3px;height:28px;background:#f01868;"></div>
<div style="left:935px;top:813.9px;width:28px;height:1.3px;background:#f01868;"></div>
<div style="left:935px;top:822.9px;width:28px;height:1.3px;background:#f01868;"></div>
<svg style="position:absolute;left:938px;top:792px;" width="13" height="10" viewBox="0 0 13 10"><path d="M0.5 0.5H12.5L6.5 9.5Z" fill="#d85868"/><path d="M0.5 0.5H12.5L6.5 3Z" fill="#f09098"/></svg>
<svg style="position:absolute;left:946.5px;top:836px;" width="13" height="10" viewBox="0 0 13 10"><path d="M0.5 9.5H12.5L6.5 0.5Z" fill="#d85868"/><path d="M6.5 0.5L9 6L6.5 9.5Z" fill="#f09098"/></svg>
<svg style="position:absolute;left:922px;top:808px;" width="10" height="13" viewBox="0 0 10 13"><path d="M0.5 0.5V12.5L9.5 6.5Z" fill="#6868d8"/><path d="M0.5 0.5L9.5 6.5L3 6.5Z" fill="#a0a0f0"/></svg>
<svg style="position:absolute;left:966px;top:817.5px;" width="10" height="13" viewBox="0 0 10 13"><path d="M9.5 0.5V12.5L0.5 6.5Z" fill="#6868d8"/><path d="M9.5 0.5L0.5 6.5L7 6.5Z" fill="#a0a0f0"/></svg>
<div class="pn" style="left:1199px;top:754px;width:295px;height:330px;"></div>
<div class="hd" style="left:1200px;top:755px;width:293px;height:25px;"></div>
<span class="t" style="left:1207.0px;top:759.5px;font:bold 11px/15px 'DejaVu Sans','Liberation Sans',sans-serif;color:#d4d4d4;transform:scaleX(0.922);">GO Tree</span>
<div class="hb" style="left:1469px;top:758px;width:20px;height:18px;"></div>
<div style="left:1472.5px;top:760.5px;width:12.5px;height:12.5px;background:linear-gradient(135deg,#a0a2a5,#55575b);"></div>
<svg style="position:absolute;left:1474.8px;top:762.7px;" width="8" height="8" viewBox="0 0 8 8"><path d="M0.8 0.8L7.2 7.2M7.2 0.8L0.8 7.2" stroke="#000" stroke-width="1.4"/></svg>
<div class="hb" style="left:1443px;top:758px;width:22px;height:18px;"></div>
<svg style="position:absolute;left:1443px;top:758px;" width="22" height="18" viewBox="0 0 22 18"><rect x="2.5" y="2" width="11" height="14" fill="#735536"/><rect x="2.5" y="2" width="4" height="14" fill="#a08262"/><rect x="5" y="0.8" width="6" height="2.8" fill="#b8a890"/><rect x="11" y="6.5" width="7.5" height="10" fill="#c4d4cc"/><path d="M12.5 9H17M12.5 11H17M12.5 13H17" stroke="#8aa098" stroke-width=".8"/></svg>
<div class="hb" style="left:1406px;top:758px;width:35px;height:18px;"></div>
<svg style="position:absolute;left:1406px;top:758px;" width="35" height="18" viewBox="0 0 35 18"><path d="M3 11.6L16.5 6L18.6 10.6L5.2 16.3Z" fill="#38393b"/><path d="M3 11.6L16.5 6L17.1 7.3L3.6 12.9Z" fill="#58595b"/><path d="M15.5 1.5L30.5 4L20.5 14.5Z" fill="#2d2e30"/><path d="M15.5 1.5L30.5 4L27 5.2L17.5 3.6Z" fill="#040404"/><ellipse cx="4.1" cy="14" rx="1.3" ry="2.5" transform="rotate(-23 4.1 14)" fill="#1c1d1f"/></svg>
<div class="hb" style="left:1384px;top:758px;width:20px;height:18px;"></div>
<svg style="position:absolute;left:1384px;top:758px;" width="20" height="18" viewBox="0 0 20 18"><rect x="3.5" y="1" width="8" height="11" fill="#7c7e80"/><path d="M5 3.5H10M5 5.5H10M5 7.5H10" stroke="#6a6c6e" stroke-width=".8"/><rect x="8" y="5" width="8.5" height="11.5" fill="#9c9ea0"/><path d="M9.5 8H15M9.5 10H15M9.5 12H15M9.5 14H15" stroke="#7a7c7e" stroke-width=".8"/></svg>
<div class="hb" style="left:1365px;top:758px;width:17px;height:18px;"></div>
<svg style="position:absolute;left:1365px;top:758px;" width="17" height="18" viewBox="0 0 17 18"><path d="M4.6 10.4L7 13.1L11.2 6.8" stroke="#000" stroke-opacity=".5" stroke-width="2.4" fill="none"/><path d="M4 9.8L6.4 12.5L10.6 6.2" stroke="#a50c18" stroke-width="2.2" fill="none"/></svg>
<div class="in" style="left:1207.5px;top:788px;width:89px;height:271px;"></div>
<div style="left:1212px;top:795px;width:11px;height:11px;background:#3f917f;border-top:1px solid #4fa592;border-left:1px solid #4fa592;"></div>
<div style="left:1215px;top:800px;width:5px;height:1.5px;background:#fff;"></div>
<div style="left:1216.8px;top:798px;width:1.5px;height:5.5px;background:#fff;"></div>
<span class="t" style="left:1228.0px;top:792.4px;font:12px/16px 'Liberation Sans',sans-serif;color:#b4b4b4;transform:scaleX(0.894);">Default</span>
<div style="left:1212px;top:811.5px;width:11px;height:11px;background:#3f917f;border-top:1px solid #4fa592;border-left:1px solid #4fa592;"></div>
<div style="left:1215px;top:816.5px;width:5px;height:1.5px;background:#fff;"></div>
<span class="t" style="left:1228.0px;top:808.9px;font:12px/16px 'Liberation Sans',sans-serif;color:#b4b4b4;transform:scaleX(0.884);">SurfaceGroup</span>
<div style="left:1226px;top:827.5px;width:11px;height:11px;background:#3f917f;border-top:1px solid #4fa592;border-left:1px solid #4fa592;"></div>
<span class="t" style="left:1242.5px;top:824.9px;font:12px/16px 'Liberation Sans',sans-serif;color:#fff;transform:scaleX(0.857);">ClientArea</span>
<svg style="position:absolute;left:1298.5px;top:785.5px;" width="13" height="13" viewBox="0 0 13 13"><circle cx="6.5" cy="6.5" r="6" fill="#000" stroke="#d8d8d8" stroke-width="1.2"/><path d="M5.5 3L1.8 6.5L5.5 10ZM7.5 3L11.2 6.5L7.5 10Z" fill="#e8e8e8"/></svg>
<span class="t" style="left:1315.0px;top:786.5px;font:bold 11px/15px 'DejaVu Sans','Liberation Sans',sans-serif;color:#b8b8b8;transform:scaleX(0.870);">Attributes</span>
<span class="t" style="left:1315.0px;top:804.5px;font:10px/14px 'DejaVu Sans','Liberation Sans',sans-serif;color:#a4a4a4;transform:scaleX(0.827);">Type</span>
<div class="vb" style="left:1368.5px;top:804.5px;width:104px;height:13.5px;"></div>
<span class="t" style="left:1371.0px;top:804.2px;font:11px/15px 'Liberation Sans',sans-serif;color:#000;transform:scaleX(0.949);">Dynamic Bitmap</span>
<span class="t" style="left:1315.0px;top:819.5px;font:10px/14px 'DejaVu Sans','Liberation Sans',sans-serif;color:#a4a4a4;transform:scaleX(0.960);">ViewID</span>
<div class="vb" style="left:1368.5px;top:819.5px;width:104px;height:13.5px;"></div>
<span class="t" style="left:1371.0px;top:819.2px;font:11px/15px 'Liberation Sans',sans-serif;color:#000;transform:scaleX(1.028);">Surface</span>
<span class="t" style="left:1315.0px;top:834.5px;font:10px/14px 'DejaVu Sans','Liberation Sans',sans-serif;color:#a4a4a4;transform:scaleX(0.968);">Top Level</span>
<div class="vb" style="left:1368.5px;top:834.5px;width:104px;height:13.5px;"></div>
<span class="t" style="left:1371.0px;top:834.2px;font:11px/15px 'Liberation Sans',sans-serif;color:#000;transform:scaleX(0.653);">1</span>
<div style="left:1314px;top:855px;width:159px;height:204px;border:1px solid #46484c;border-top-color:#2e3034;border-left-color:#2e3034;"></div>
<div style="left:1325px;top:860.55px;width:10px;height:10px;background:#fff;"></div>
<svg style="position:absolute;left:1325px;top:860.55px;" width="10" height="10" viewBox="0 0 10 10"><path d="M1.8 1.8L8.2 8.2M8.2 1.8L1.8 8.2" stroke="#000" stroke-width="2.3"/></svg>
<span class="t" style="left:1355.0px;top:857.4px;font:12px/16px 'Liberation Sans',sans-serif;color:#aeaeae;letter-spacing:0.3px;">Visible</span>
<div style="left:1325px;top:876.55px;width:10px;height:10px;background:#fff;"></div>
<svg style="position:absolute;left:1325px;top:876.55px;" width="10" height="10" viewBox="0 0 10 10"><path d="M1.8 1.8L8.2 8.2M8.2 1.8L1.8 8.2" stroke="#000" stroke-width="2.3"/></svg>
<span class="t" style="left:1355.0px;top:873.4px;font:12px/16px 'Liberation Sans',sans-serif;color:#aeaeae;letter-spacing:0.3px;transform:scaleX(0.983);">Selectable</span>
<div style="left:1325px;top:892.55px;width:10px;height:10px;background:#fff;"></div>
<svg style="position:absolute;left:1325px;top:892.55px;" width="10" height="10" viewBox="0 0 10 10"><path d="M1.8 1.8L8.2 8.2M8.2 1.8L1.8 8.2" stroke="#000" stroke-width="2.3"/></svg>
<span class="t" style="left:1355.0px;top:889.4px;font:12px/16px 'Liberation Sans',sans-serif;color:#aeaeae;letter-spacing:0.3px;transform:scaleX(1.033);">Topmost</span>
<div style="left:1325px;top:908.55px;width:10px;height:10px;background:#fff;"></div>
<svg style="position:absolute;left:1325px;top:908.55px;" width="10" height="10" viewBox="0 0 10 10"><path d="M1.8 1.8L8.2 8.2M8.2 1.8L1.8 8.2" stroke="#000" stroke-width="2.3"/></svg>
<span class="t" style="left:1355.0px;top:905.4px;font:12px/16px 'Liberation Sans',sans-serif;color:#aeaeae;letter-spacing:0.3px;">Bottommost</span>
<div style="left:1325px;top:924.55px;width:10px;height:10px;background:#fff;"></div>
<span class="t" style="left:1355.0px;top:921.4px;font:12px/16px 'Liberation Sans',sans-serif;color:#aeaeae;letter-spacing:0.3px;transform:scaleX(0.942);">Fixed Z-Order</span>
<div style="left:1325px;top:940.55px;width:10px;height:10px;background:#fff;"></div>
<svg style="position:absolute;left:1325px;top:940.55px;" width="10" height="10" viewBox="0 0 10 10"><path d="M1.8 1.8L8.2 8.2M8.2 1.8L1.8 8.2" stroke="#000" stroke-width="2.3"/></svg>
<span class="t" style="left:1355.0px;top:937.4px;font:12px/16px 'Liberation Sans',sans-serif;color:#aeaeae;letter-spacing:0.3px;">Messaging</span>
<div style="left:1325px;top:956.55px;width:10px;height:10px;background:#fff;"></div>
<span class="t" style="left:1355.0px;top:953.4px;font:12px/16px 'Liberation Sans',sans-serif;color:#aeaeae;letter-spacing:0.3px;">DrawClipping</span>
<div style="left:1325px;top:972.55px;width:10px;height:10px;background:#fff;"></div>
<span class="t" style="left:1355.0px;top:969.4px;font:12px/16px 'Liberation Sans',sans-serif;color:#aeaeae;letter-spacing:0.3px;transform:scaleX(0.982);">Select Clipping</span>
<div style="left:1325px;top:988.55px;width:10px;height:10px;background:#fff;"></div>
<svg style="position:absolute;left:1325px;top:988.55px;" width="10" height="10" viewBox="0 0 10 10"><path d="M1.8 1.8L8.2 8.2M8.2 1.8L1.8 8.2" stroke="#000" stroke-width="2.3"/></svg>
<span class="t" style="left:1355.0px;top:985.4px;font:12px/16px 'Liberation Sans',sans-serif;color:#aeaeae;letter-spacing:0.3px;transform:scaleX(0.949);">Scroll vertical</span>
<div style="left:1325px;top:1004.55px;width:10px;height:10px;background:#fff;"></div>
<span class="t" style="left:1355.0px;top:1001.4px;font:12px/16px 'Liberation Sans',sans-serif;color:#aeaeae;letter-spacing:0.3px;transform:scaleX(0.962);">Scroll horizontal</span>
<div style="left:1325px;top:1020.55px;width:10px;height:10px;background:#fff;"></div>
<svg style="position:absolute;left:1325px;top:1020.55px;" width="10" height="10" viewBox="0 0 10 10"><path d="M1.8 1.8L8.2 8.2M8.2 1.8L1.8 8.2" stroke="#000" stroke-width="2.3"/></svg>
<span class="t" style="left:1355.0px;top:1017.5px;font:12px/16px 'Liberation Sans',sans-serif;color:#aeaeae;letter-spacing:0.3px;transform:scaleX(0.974);">Align ChildGOs</span>
<div style="left:1325px;top:1036.55px;width:10px;height:10px;background:#fff;"></div>
<span class="t" style="left:1355.0px;top:1033.5px;font:12px/16px 'Liberation Sans',sans-serif;color:#aeaeae;letter-spacing:0.3px;transform:scaleX(0.976);">Not resizeable</span>
<div class="pn" style="left:586px;top:784px;width:210px;height:234px;"></div>
<div class="hd" style="left:587px;top:785px;width:208px;height:25px;"></div>
<span class="t" style="left:594.0px;top:789.5px;font:bold 11px/15px 'DejaVu Sans','Liberation Sans',sans-serif;color:#d4d4d4;transform:scaleX(0.895);">Color</span>
<div class="hb" style="left:771px;top:788px;width:20px;height:18px;"></div>
<div style="left:774.5px;top:790.5px;width:12.5px;height:12.5px;background:linear-gradient(135deg,#a0a2a5,#55575b);"></div>
<svg style="position:absolute;left:776.8px;top:792.7px;" width="8" height="8" viewBox="0 0 8 8"><path d="M0.8 0.8L7.2 7.2M7.2 0.8L0.8 7.2" stroke="#000" stroke-width="1.4"/></svg>
<div class="hb" style="left:745px;top:788px;width:22px;height:18px;"></div>
<svg style="position:absolute;left:745px;top:788px;" width="22" height="18" viewBox="0 0 22 18"><rect x="2.5" y="2" width="11" height="14" fill="#735536"/><rect x="2.5" y="2" width="4" height="14" fill="#a08262"/><rect x="5" y="0.8" width="6" height="2.8" fill="#b8a890"/><rect x="11" y="6.5" width="7.5" height="10" fill="#c4d4cc"/><path d="M12.5 9H17M12.5 11H17M12.5 13H17" stroke="#8aa098" stroke-width=".8"/></svg>
<div class="hb" style="left:708px;top:788px;width:35px;height:18px;"></div>
<svg style="position:absolute;left:708px;top:788px;" width="35" height="18" viewBox="0 0 35 18"><path d="M3 11.6L16.5 6L18.6 10.6L5.2 16.3Z" fill="#38393b"/><path d="M3 11.6L16.5 6L17.1 7.3L3.6 12.9Z" fill="#58595b"/><path d="M15.5 1.5L30.5 4L20.5 14.5Z" fill="#2d2e30"/><path d="M15.5 1.5L30.5 4L27 5.2L17.5 3.6Z" fill="#040404"/><ellipse cx="4.1" cy="14" rx="1.3" ry="2.5" transform="rotate(-23 4.1 14)" fill="#1c1d1f"/></svg>
<div class="hb" style="left:686px;top:788px;width:20px;height:18px;"></div>
<svg style="position:absolute;left:686px;top:788px;" width="20" height="18" viewBox="0 0 20 18"><rect x="3.5" y="1" width="8" height="11" fill="#7c7e80"/><path d="M5 3.5H10M5 5.5H10M5 7.5H10" stroke="#6a6c6e" stroke-width=".8"/><rect x="8" y="5" width="8.5" height="11.5" fill="#9c9ea0"/><path d="M9.5 8H15M9.5 10H15M9.5 12H15M9.5 14H15" stroke="#7a7c7e" stroke-width=".8"/></svg>
<div class="hb" style="left:667px;top:788px;width:17px;height:18px;"></div>
<svg style="position:absolute;left:667px;top:788px;" width="17" height="18" viewBox="0 0 17 18"><g fill="#e8e8e8"><rect x="4.5" y="11.5" width="1.5" height="1.5"/><rect x="8" y="11.5" width="1.5" height="1.5"/><rect x="11.5" y="11.5" width="1.5" height="1.5"/></g></svg>
<div class="hb" style="left:648px;top:788px;width:17px;height:18px;"></div>
<svg style="position:absolute;left:648px;top:788px;" width="17" height="18" viewBox="0 0 17 18"><path d="M4.6 10.4L7 13.1L11.2 6.8" stroke="#000" stroke-opacity=".5" stroke-width="2.4" fill="none"/><path d="M4 9.8L6.4 12.5L10.6 6.2" stroke="#30c838" stroke-width="2.2" fill="none"/></svg>
<div style="left:586.5px;top:812px;width:176px;height:176px;background:radial-gradient(circle,transparent 54px,rgba(0,0,0,.55) 62px,rgba(0,0,0,.55) 82px,rgba(0,0,0,0) 87px);border-radius:50%;left:588px;top:814px;"></div>
<div style="left:593.5px;top:819px;width:162px;height:162px;background:conic-gradient(from 90deg,#ff0000,#ffff00,#00ff00,#00ffff,#0000ff,#ff00ff,#ff0000);border-radius:50%;-webkit-mask:radial-gradient(circle,transparent 62px,#000 64.5px,#000 79.5px,transparent 81.5px);mask:radial-gradient(circle,transparent 62px,#000 64.5px,#000 79.5px,transparent 81.5px);"></div>
<div style="left:593.5px;top:819px;width:162px;height:162px;background:radial-gradient(circle,transparent 62px,rgba(0,0,0,.5) 63.5px,rgba(0,0,0,0) 70px,rgba(0,0,0,0) 75px,rgba(0,0,0,.35) 81px,transparent 82px);border-radius:50%;"></div>
<div style="left:633px;top:860.5px;width:77px;height:77px;background-image:linear-gradient(180deg,rgba(16,136,255,0) 0%,rgba(16,136,255,.55) 50%,rgba(16,136,255,1) 100%),linear-gradient(90deg,#000 0%,#fff 100%);border-right:1px solid #555;border-bottom:1px solid #555;"></div>
<div style="left:608px;top:860px;width:8px;height:8px;background:radial-gradient(circle at 35% 30%,#fff 0%,#1838e0 30%,#000860 90%);border-radius:50%;box-shadow:0 1px 2px rgba(0,0,0,.7);"></div>
<div style="left:651px;top:863.5px;width:8px;height:8px;background:radial-gradient(circle at 35% 30%,#fff 0%,#303030 30%,#000 90%);border-radius:50%;box-shadow:0 1px 2px rgba(0,0,0,.7);"></div>
<div class="vb" style="left:760.5px;top:827px;width:27px;height:12.5px;"></div>
<span class="t" style="left:767.9px;top:826.2px;font:11px/15px 'Liberation Sans',sans-serif;color:#000;">68</span>
<span class="t" style="left:765.5px;top:840.0px;font:bold 12px/16px 'Liberation Sans',sans-serif;color:#9a9a9a;transform:scaleX(0.750);">Red</span>
<div class="vb" style="left:760.5px;top:862px;width:27px;height:12.5px;"></div>
<span class="t" style="left:767.9px;top:861.2px;font:11px/15px 'Liberation Sans',sans-serif;color:#000;">79</span>
<span class="t" style="left:760.5px;top:875.0px;font:bold 12px/16px 'Liberation Sans',sans-serif;color:#9a9a9a;transform:scaleX(0.779);">Green</span>
<div class="vb" style="left:760.5px;top:897px;width:27px;height:12.5px;"></div>
<span class="t" style="left:767.9px;top:896.2px;font:11px/15px 'Liberation Sans',sans-serif;color:#000;">90</span>
<span class="t" style="left:764.0px;top:910.0px;font:bold 12px/16px 'Liberation Sans',sans-serif;color:#9a9a9a;transform:scaleX(0.769);">Blue</span>
<div class="vb" style="left:760.5px;top:937px;width:27px;height:12.5px;"></div>
<span class="t" style="left:764.8px;top:936.2px;font:11px/15px 'Liberation Sans',sans-serif;color:#000;">255</span>
<span class="t" style="left:757.5px;top:950.0px;font:bold 12px/16px 'Liberation Sans',sans-serif;color:#9a9a9a;transform:scaleX(0.750);">Opacity</span>
<span class="t" style="left:604.0px;top:991.5px;font:bold 12px/16px 'Liberation Sans',sans-serif;color:#9a9a9a;transform:scaleX(0.764);">Result</span>
<div style="left:641px;top:986px;width:123px;height:23px;background:#44505e;border-top:1px solid #22262c;border-left:1px solid #22262c;border-right:1px solid #6a7684;border-bottom:1px solid #6a7684;"></div>
<div class="pn" style="left:278px;top:880px;width:240px;height:168px;"></div>
<span class="t" style="left:285.5px;top:884.5px;font:bold 11px/15px 'DejaVu Sans','Liberation Sans',sans-serif;color:#c9c9c9;transform:scaleX(0.877);">PadList I</span>
<div style="left:499.5px;top:885px;width:12px;height:12px;background:linear-gradient(135deg,#9a9c9f,#5c5e62);border:1px solid #6a6c70;border-top-color:#b0b2b5;border-left-color:#a0a2a5;"></div>
<svg style="position:absolute;left:499.5px;top:885px;" width="12" height="12" viewBox="0 0 12 12"><path d="M3 3L9 9M9 3L3 9" stroke="#000" stroke-width="1.4" fill="none"/></svg>
<div class="tab on" style="left:285px;top:905px;width:52px;height:15px;"></div>
<span class="t" style="left:288.7px;top:903.4px;font:13px/17px 'Liberation Sans',sans-serif;color:#0b5247;transform:scaleX(0.819);">Attributes</span>
<div class="tab on" style="left:339px;top:905px;width:68px;height:15px;"></div>
<span class="t" style="left:342.7px;top:903.4px;font:13px/17px 'Liberation Sans',sans-serif;color:#0b5247;transform:scaleX(0.844);">Connections</span>
<div class="tab" style="left:409px;top:905px;width:41px;height:15px;"></div>
<span class="t" style="left:412.7px;top:903.4px;font:13px/17px 'Liberation Sans',sans-serif;color:#17181a;transform:scaleX(0.815);">Freeze</span>
<div class="tab" style="left:452px;top:905px;width:29px;height:15px;"></div>
<span class="t" style="left:455.7px;top:903.4px;font:13px/17px 'Liberation Sans',sans-serif;color:#17181a;transform:scaleX(0.815);">Vars</span>
<div class="tab" style="left:285px;top:922px;width:52px;height:15px;"></div>
<span class="t" style="left:288.7px;top:920.4px;font:13px/17px 'Liberation Sans',sans-serif;color:#17181a;transform:scaleX(0.772);">Store</span>
<div class="tab" style="left:339px;top:922px;width:68px;height:15px;"></div>
<span class="t" style="left:342.7px;top:920.4px;font:13px/17px 'Liberation Sans',sans-serif;color:#17181a;transform:scaleX(0.846);">Connect</span>
<div class="tab" style="left:409px;top:922px;width:41px;height:15px;"></div>
<span class="t" style="left:412.7px;top:920.4px;font:13px/17px 'Liberation Sans',sans-serif;color:#17181a;transform:scaleX(0.825);">Export</span>
<div class="in" style="left:286px;top:940.5px;width:215.5px;height:73.5px;"></div>
<div style="left:289.5px;top:942.5px;width:11.5px;height:11px;background:linear-gradient(135deg,#9a9ca0,#55575b);border:1px solid #2a2c30;"></div>
<div style="left:289.5px;top:957.5px;width:11.5px;height:11px;background:linear-gradient(135deg,#9a9ca0,#55575b);border:1px solid #2a2c30;"></div>
<div style="left:289.5px;top:944.5px;width:3px;height:4.5px;background:#f02040;border-radius:50%;"></div>
<svg style="position:absolute;left:308.4px;top:942.4px;" width="9.2" height="9.2" viewBox="0 0 9.2 9.2"><path d="M4.6 1L8.2 4.6L4.6 8.2L1 4.6Z" fill="#fff"/></svg>
<svg style="position:absolute;left:311px;top:957px;" width="5" height="10" viewBox="0 0 5 10"><path d="M0 0L5 5L0 10Z" fill="#f06850"/></svg>
<span class="t" style="left:322.5px;top:940.9px;font:12px/16px 'Liberation Sans',sans-serif;color:#b4b4b4;transform:scaleX(0.900);">Show</span>
<span class="t" style="left:322.5px;top:955.9px;font:12px/16px 'Liberation Sans',sans-serif;color:#b4b4b4;transform:scaleX(0.852);">Flags</span>
<span class="t" style="left:406.5px;top:940.9px;font:12px/16px 'Liberation Sans',sans-serif;color:#b4b4b4;">1</span>
<span class="t" style="left:406.5px;top:955.9px;font:12px/16px 'Liberation Sans',sans-serif;color:#b4b4b4;">1</span>
<span class="t" style="left:287.5px;top:1017.0px;font:10px/14px 'Liberation Sans',sans-serif;color:#9c9c9c;letter-spacing:1px;transform:scaleX(0.883);">Panel</span>
<svg style="position:absolute;left:505px;top:1035px;" width="10" height="10" viewBox="0 0 10 10"><path d="M10 0L10 10L0 10Z" fill="#45474b"/></svg>
<div class="pn" style="left:1588px;top:759px;width:228px;height:254px;"></div>
<div class="hd" style="left:1589px;top:760px;width:226px;height:23px;"></div>
<span class="t" style="left:1596.0px;top:763.5px;font:bold 11px/15px 'DejaVu Sans','Liberation Sans',sans-serif;color:#d4d4d4;transform:scaleX(0.866);">Help Window</span>
<div style="left:1797.5px;top:764.5px;width:12.5px;height:12.5px;background:linear-gradient(135deg,#9a9c9f,#5c5e62);border:1px solid #6a6c70;border-top-color:#b0b2b5;border-left-color:#a0a2a5;"></div>
<svg style="position:absolute;left:1797.5px;top:764.5px;" width="12.5" height="12.5" viewBox="0 0 12.5 12.5"><path d="M3 3L9.5 9.5M9.5 3L3 9.5" stroke="#000" stroke-width="1.4" fill="none"/></svg>
<svg style="position:absolute;left:1678px;top:761.5px;" width="19" height="20" viewBox="0 0 19 20"><path d="M5.5 0.5H13.5L18.5 5.5V13.5L13.5 18.5H5.5L0.5 13.5V5.5Z" fill="#000"/><rect x="9" y="18" width="1.5" height="2" fill="#000"/></svg>
<span class="t" style="left:1682.0px;top:766.5px;font:6px/10px 'Liberation Sans',sans-serif;color:#55575b;transform:scaleX(0.678);">STOP</span>
<div style="left:1602.5px;top:794.5px;width:201px;height:14.5px;background:#c8c8c8;border-top:1px solid #2a2c30;border-left:1px solid #2a2c30;"></div>
<span class="t" style="left:1662.0px;top:795.0px;font:11px/15px 'Liberation Sans',sans-serif;color:#000;transform:scaleX(1.015);">SurfaceInterface</span>
<span class="t" style="left:1601.5px;top:817.0px;font:11px/15px 'Liberation Sans',sans-serif;color:#a8a8a8;transform:scaleX(0.960);">Module Description (PC)</span>
<div style="left:1600px;top:835.5px;width:203px;height:166px;background:#383a3e;border:1px solid #33353a;border-bottom-color:#3e4044;border-right-color:#3e4044;"></div>
<div style="left:0px;top:1062px;width:1920px;height:18px;background:#1a1b20;"></div>
<div style="left:8px;top:1061px;width:1894px;height:1px;background:#25272b;"></div>
</body></html>
